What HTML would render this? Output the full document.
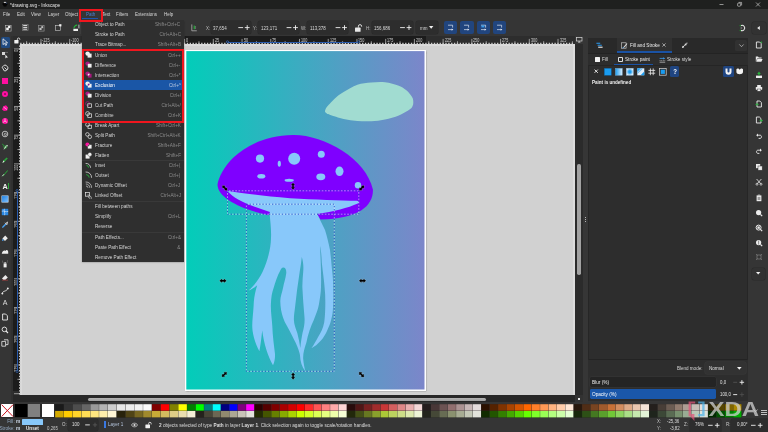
<!DOCTYPE html>
<html lang="en"><head><meta charset="utf-8"><title>*drawing.svg - Inkscape</title>
<style>
html,body{margin:0;padding:0;}
body{width:768px;height:432px;overflow:hidden;background:#353535;position:relative;font-family:"Liberation Sans",sans-serif;}
.r{position:absolute;}
.t{position:absolute;white-space:nowrap;letter-spacing:0;}
svg{position:absolute;overflow:visible;}
#w{position:absolute;left:0;top:0;width:768px;height:432px;overflow:hidden;will-change:transform;}
</style></head><body><div id="w">

<div class="r" style="left:0px;top:0px;width:768px;height:8.7px;background:#1f201f;"></div>
<div class="r" style="left:0px;top:8.7px;width:768px;height:11.3px;background:#363636;"></div>
<svg style="left:1.6px;top:1.2px" width="6" height="6" viewBox="0 0 6 6"><path d="M3 0.2L5.6 2.8Q5.9 3.4 5.2 3.8L4.4 4.2L5 5L3 5.8L1 5L1.6 4.2L0.8 3.8Q0.1 3.4 0.4 2.8Z" fill="#050505"/><path d="M3 0.4L4.6 2L3.6 1.7L3 2.3L2.3 1.7L1.3 2.1Z" fill="#f4f4f4"/><path d="M3.6 0.9L5.3 2.7L4.4 2.5Z" fill="#4a78c8"/></svg>
<span class="t" style="left:9.8px;transform-origin:0 50%;top:1.70px;font-size:5.0px;line-height:6.00px;color:#e6e6e6;font-weight:normal;transform:scaleX(0.945);">*drawing.svg - Inkscape</span>
<svg style="left:712px;top:0" width="56" height="9" viewBox="0 0 56 9"><path d="M7.5 4.5h4" stroke="#e0e0e0" stroke-width="0.6" fill="none"/><rect x="25.6" y="3.2" width="3" height="3" rx="0.6" stroke="#e0e0e0" stroke-width="0.6" fill="none"/><path d="M26.6 2.4h3v3" stroke="#e0e0e0" stroke-width="0.6" fill="none"/><path d="M44 2.5l4 4M48 2.5l-4 4" stroke="#e0e0e0" stroke-width="0.6" fill="none"/></svg>
<span class="t" style="left:3.1px;transform-origin:0 50%;top:11.10px;font-size:5.0px;line-height:6.00px;color:#d8d8d8;font-weight:normal;transform:scaleX(0.9);">File</span>
<span class="t" style="left:17.1px;transform-origin:0 50%;top:11.10px;font-size:5.0px;line-height:6.00px;color:#d8d8d8;font-weight:normal;transform:scaleX(0.9);">Edit</span>
<span class="t" style="left:31.2px;transform-origin:0 50%;top:11.10px;font-size:5.0px;line-height:6.00px;color:#d8d8d8;font-weight:normal;transform:scaleX(0.9);">View</span>
<span class="t" style="left:47.7px;transform-origin:0 50%;top:11.10px;font-size:5.0px;line-height:6.00px;color:#d8d8d8;font-weight:normal;transform:scaleX(0.9);">Layer</span>
<span class="t" style="left:65.2px;transform-origin:0 50%;top:11.10px;font-size:5.0px;line-height:6.00px;color:#d8d8d8;font-weight:normal;transform:scaleX(0.9);">Object</span>
<span class="t" style="left:85.6px;transform-origin:0 50%;top:11.10px;font-size:5.0px;line-height:6.00px;color:#4a80d4;font-weight:normal;transform:scaleX(0.9);">Path</span>
<span class="t" style="left:101.6px;transform-origin:0 50%;top:11.10px;font-size:5.0px;line-height:6.00px;color:#d8d8d8;font-weight:normal;transform:scaleX(0.9);">Text</span>
<span class="t" style="left:116.2px;transform-origin:0 50%;top:11.10px;font-size:5.0px;line-height:6.00px;color:#d8d8d8;font-weight:normal;transform:scaleX(0.9);">Filters</span>
<span class="t" style="left:135px;transform-origin:0 50%;top:11.10px;font-size:5.0px;line-height:6.00px;color:#d8d8d8;font-weight:normal;transform:scaleX(0.9);">Extensions</span>
<span class="t" style="left:163.9px;transform-origin:0 50%;top:11.10px;font-size:5.0px;line-height:6.00px;color:#d8d8d8;font-weight:normal;transform:scaleX(0.9);">Help</span>
<div class="r" style="left:82.3px;top:18.0px;width:15.8px;height:1.0px;background:#1d55b0;"></div>
<div class="r" style="left:210.7px;top:21.2px;width:40px;height:12.6px;background:#2d2d2d;border-radius:2px;box-shadow:0 0 0 0.5px #292929;"></div>
<span class="t" style="left:213.29999999999998px;transform-origin:0 50%;top:24.78px;font-size:5.2px;line-height:6.24px;color:#d8d8d8;font-weight:normal;transform:scaleX(0.86);">37,654</span>
<span class="t" style="left:205.5px;transform-origin:0 50%;top:24.90px;font-size:5.0px;line-height:6.00px;color:#bdbdbd;font-weight:normal;transform:scaleX(0.88);">X:</span>
<svg style="left:0;top:0" width="768" height="40"><path d="M238.29999999999998 27.6h4.8 M244.79999999999998 27.6h4.8 M247.2 25.2v4.8" stroke="#f0f0f0" stroke-width="0.9" fill="none"/></svg>
<div class="r" style="left:258px;top:21.2px;width:41px;height:12.6px;background:#2d2d2d;border-radius:2px;box-shadow:0 0 0 0.5px #292929;"></div>
<span class="t" style="left:260.6px;transform-origin:0 50%;top:24.78px;font-size:5.2px;line-height:6.24px;color:#d8d8d8;font-weight:normal;transform:scaleX(0.86);">123,171</span>
<span class="t" style="left:253px;transform-origin:0 50%;top:24.90px;font-size:5.0px;line-height:6.00px;color:#bdbdbd;font-weight:normal;transform:scaleX(0.88);">Y:</span>
<svg style="left:0;top:0" width="768" height="40"><path d="M286.6 27.6h4.8 M293.1 27.6h4.8 M295.5 25.2v4.8" stroke="#f0f0f0" stroke-width="0.9" fill="none"/></svg>
<div class="r" style="left:307px;top:21.2px;width:41px;height:12.6px;background:#2d2d2d;border-radius:2px;box-shadow:0 0 0 0.5px #292929;"></div>
<span class="t" style="left:309.6px;transform-origin:0 50%;top:24.78px;font-size:5.2px;line-height:6.24px;color:#d8d8d8;font-weight:normal;transform:scaleX(0.86);">113,378</span>
<span class="t" style="left:300.5px;transform-origin:0 50%;top:24.90px;font-size:5.0px;line-height:6.00px;color:#bdbdbd;font-weight:normal;transform:scaleX(0.88);">W:</span>
<svg style="left:0;top:0" width="768" height="40"><path d="M335.6 27.6h4.8 M342.1 27.6h4.8 M344.5 25.2v4.8" stroke="#f0f0f0" stroke-width="0.9" fill="none"/></svg>
<div class="r" style="left:371.5px;top:21.2px;width:41px;height:12.6px;background:#2d2d2d;border-radius:2px;box-shadow:0 0 0 0.5px #292929;"></div>
<span class="t" style="left:374.1px;transform-origin:0 50%;top:24.78px;font-size:5.2px;line-height:6.24px;color:#d8d8d8;font-weight:normal;transform:scaleX(0.86);">156,686</span>
<span class="t" style="left:365.8px;transform-origin:0 50%;top:24.90px;font-size:5.0px;line-height:6.00px;color:#bdbdbd;font-weight:normal;transform:scaleX(0.88);">H:</span>
<svg style="left:0;top:0" width="768" height="40"><path d="M400.1 27.6h4.8 M406.6 27.6h4.8 M409.0 25.2v4.8" stroke="#f0f0f0" stroke-width="0.9" fill="none"/></svg>
<svg style="left:353.5px;top:22.5px" width="9" height="10" viewBox="0 0 9 10"><rect x="1" y="4.6" width="5.6" height="4.2" rx="0.6" fill="#e8e8e8"/><path d="M4.4 4.6V3.2a1.6 1.6 0 0 1 3.2 0V3.8" stroke="#e8e8e8" stroke-width="0.9" fill="none"/></svg>
<div class="r" style="left:415.5px;top:21.2px;width:22.8px;height:12.6px;background:#2d2d2d;border-radius:2px;box-shadow:0 0 0 0.5px #292929;"></div>
<span class="t" style="left:419.6px;transform-origin:0 50%;top:24.90px;font-size:5.0px;line-height:6.00px;color:#d8d8d8;font-weight:normal;transform:scaleX(0.9);">mm</span>
<svg style="left:429.3px;top:26.4px" width="4.4" height="3" viewBox="0 0 4.4 3"><path d="M0 0h4.4L2.2 2.8z" fill="#f0f0f0"/></svg>
<div class="r" style="left:443.8px;top:21.2px;width:13.4px;height:12.6px;background:#21457e;border-radius:2px;"></div>
<svg style="left:447.0px;top:23.6px" width="7" height="8" viewBox="0 0 7 8"><path d="M1 1.2h4.6M5.6 1.2v2.4M1 5.6h4.2" stroke="#dfe6f2" stroke-width="0.7" fill="none"/><path d="M4.6 4.4l1.8 1.2-1.8 1.2z" fill="#dfe6f2"/></svg>
<div class="r" style="left:460.2px;top:21.2px;width:13.4px;height:12.6px;background:#21457e;border-radius:2px;"></div>
<svg style="left:463.4px;top:23.6px" width="7" height="8" viewBox="0 0 7 8"><path d="M1 1.2h4.6M5.6 1.2v2.4M1 5.6h4.2" stroke="#dfe6f2" stroke-width="0.7" fill="none"/><path d="M4.6 4.4l1.8 1.2-1.8 1.2z" fill="#dfe6f2"/></svg>
<div class="r" style="left:476.6px;top:21.2px;width:13.4px;height:12.6px;background:#21457e;border-radius:2px;"></div>
<svg style="left:479.8px;top:23.6px" width="7" height="8" viewBox="0 0 7 8"><path d="M1 1.2h4.6M5.6 1.2v2.4M1 5.6h4.2" stroke="#dfe6f2" stroke-width="0.7" fill="none"/><path d="M4.6 4.4l1.8 1.2-1.8 1.2z" fill="#dfe6f2"/><rect x="1.4" y="1.4" width="3" height="2" fill="#3a9be8"/></svg>
<div class="r" style="left:493px;top:21.2px;width:13.4px;height:12.6px;background:#21457e;border-radius:2px;"></div>
<svg style="left:496.2px;top:23.6px" width="7" height="8" viewBox="0 0 7 8"><path d="M1 1.2h4.6M5.6 1.2v2.4M1 5.6h4.2" stroke="#dfe6f2" stroke-width="0.7" fill="none"/><path d="M4.6 4.4l1.8 1.2-1.8 1.2z" fill="#dfe6f2"/></svg>
<svg style="left:5.3px;top:24.6px" width="6.4" height="6.4" viewBox="0 0 6.4 6.4"><rect x="0.3" y="0.3" width="5.8" height="5.8" fill="none" stroke="#bdbdbd" stroke-width="0.6"/><rect x="1.2" y="2.6" width="2.6" height="2.6" fill="#f2f2f2"/><circle cx="4.2" cy="2" r="1.3" fill="#f2f2f2"/></svg>
<svg style="left:21.5px;top:24.4px" width="6.4" height="6.8" viewBox="0 0 6.4 6.8"><rect x="0.3" y="0.3" width="5.8" height="6.2" fill="none" stroke="#9a9a9a" stroke-width="0.5"/><path d="M1.2 1.6h4M1.2 3.4h4M1.2 5.2h4" stroke="#e6e6e6" stroke-width="1"/></svg>
<svg style="left:38.4px;top:24.6px" width="6.4" height="6.4" viewBox="0 0 6.4 6.4"><rect x="0.3" y="0.3" width="5.8" height="5.8" fill="#3c3c3c" stroke="#9a9a9a" stroke-width="0.6"/><rect x="1.4" y="2.8" width="2.2" height="2.2" fill="#bdbdbd"/><circle cx="4.2" cy="2.2" r="1.1" fill="#bdbdbd"/></svg>
<svg style="left:54.8px;top:24px" width="7" height="7" viewBox="0 0 7 7"><rect x="0.5" y="1.6" width="4.8" height="4.8" fill="none" stroke="#c8c8c8" stroke-width="0.6"/><rect x="4.2" y="0.2" width="2.2" height="2.2" fill="#f4f4f4"/></svg>
<svg style="left:72.8px;top:23.6px" width="8" height="8" viewBox="0 0 8 8"><path d="M1 4.4A3 3 0 0 1 4.2 1.2" stroke="#27b33b" stroke-width="1.2" fill="none"/><rect x="0.4" y="4.8" width="4.6" height="2.2" fill="#f2f2f2"/><rect x="5.4" y="0.6" width="1" height="3.8" fill="#bdbdbd"/></svg>
<div class="r" style="left:79.6px;top:22px;width:0.5px;height:12px;background:#3d3d3d;"></div>
<svg style="left:191.2px;top:23.6px" width="6.4" height="8" viewBox="0 0 6.4 8"><path d="M0.8 0.4V6.8H5.8" stroke="#b0b0b0" stroke-width="0.8" fill="none"/><rect x="2.6" y="1.6" width="1.5" height="3.6" fill="#2a9a3a"/><path d="M4.6 2V5" stroke="#8a8a8a" stroke-width="0.6"/></svg>
<svg style="left:737.6px;top:23.6px" width="8" height="8" viewBox="0 0 8 8"><path d="M2.6 1.7A2.7 2.7 0 1 1 2.6 6.3" fill="none" stroke="#e8e8e8" stroke-width="1.1"/><rect x="1.6" y="0.9" width="1.3" height="1.3" fill="#1f8a2c"/><rect x="1.6" y="5.8" width="1.3" height="1.3" fill="#1f8a2c"/><circle cx="3.4" cy="4" r="1" fill="#6a6a6a"/></svg>
<div class="r" style="left:752px;top:21.7px;width:14.2px;height:12.4px;background:#323232;border-radius:2px;box-shadow:0 0 0 0.5px #2a2a2a;"></div>
<svg style="left:757px;top:26px" width="3" height="4" viewBox="0 0 3 4"><path d="M2.8 0v4L0.2 2z" fill="#f0f0f0"/></svg>
<div class="r" style="left:20.0px;top:43.8px;width:554.8px;height:350.8px;background:#d1d1d1;"></div>
<div class="r" style="left:20.0px;top:43.8px;width:554.8px;height:2.4px;background:#dbdbdb;"></div>
<div class="r" style="left:20.0px;top:43.8px;width:1.5px;height:350.8px;background:#dadada;"></div>
<div class="r" style="left:572.6999999999999px;top:43.8px;width:2.1px;height:350.8px;background:#dcdcdc;"></div>
<div class="r" style="left:13.2px;top:394.6px;width:561.5999999999999px;height:1.0px;background:#1c1c1c;"></div>
<div class="r" style="left:12.6px;top:36.1px;width:562.1999999999999px;height:7.8px;background:#2d2d2d;"></div>
<div class="r" style="left:184.6px;top:36.1px;width:241.4px;height:7.8px;background:#1c1c1c;"></div>
<div class="r" style="left:12.6px;top:43.8px;width:7.4px;height:350.8px;background:#2d2d2d;"></div>
<div class="r" style="left:12.6px;top:48.7px;width:7.4px;height:342.6px;background:#1c1c1c;"></div>
<svg style="left:0;top:0" width="768" height="50"><path d="M20.87 42.8V44.3M23.74 42.8V44.3M26.61 42.8V44.3M29.48 42.8V44.3M32.36 42.8V44.3M35.23 42.8V44.3M38.10 42.8V44.3M40.97 42.8V44.3M43.85 42.8V44.3M46.72 42.8V44.3M49.59 42.8V44.3M52.47 42.8V44.3M55.34 42.8V44.3M58.21 42.8V44.3M61.08 42.8V44.3M63.95 42.8V44.3M66.83 42.8V44.3M69.70 42.8V44.3M72.57 42.8V44.3M75.44 42.8V44.3M78.32 42.8V44.3M81.19 42.8V44.3M84.06 42.8V44.3M86.93 42.8V44.3M89.81 42.8V44.3M92.68 42.8V44.3M95.55 42.8V44.3M98.42 42.8V44.3M101.30 42.8V44.3M104.17 42.8V44.3M107.04 42.8V44.3M109.91 42.8V44.3M112.79 42.8V44.3M115.66 42.8V44.3M118.53 42.8V44.3M121.41 42.8V44.3M124.28 42.8V44.3M127.15 42.8V44.3M130.02 42.8V44.3M132.89 42.8V44.3M135.77 42.8V44.3M138.64 42.8V44.3M141.51 42.8V44.3M144.38 42.8V44.3M147.26 42.8V44.3M150.13 42.8V44.3M153.00 42.8V44.3M155.88 42.8V44.3M158.75 42.8V44.3M161.62 42.8V44.3M164.49 42.8V44.3M167.37 42.8V44.3M170.24 42.8V44.3M173.11 42.8V44.3M175.98 42.8V44.3M178.85 42.8V44.3M181.73 42.8V44.3M184.60 42.8V44.3M187.47 42.8V44.3M190.34 42.8V44.3M193.22 42.8V44.3M196.09 42.8V44.3M198.96 42.8V44.3M201.83 42.8V44.3M204.71 42.8V44.3M207.58 42.8V44.3M210.45 42.8V44.3M213.32 42.8V44.3M216.20 42.8V44.3M219.07 42.8V44.3M221.94 42.8V44.3M224.81 42.8V44.3M227.69 42.8V44.3M230.56 42.8V44.3M233.43 42.8V44.3M236.31 42.8V44.3M239.18 42.8V44.3M242.05 42.8V44.3M244.92 42.8V44.3M247.79 42.8V44.3M250.67 42.8V44.3M253.54 42.8V44.3M256.41 42.8V44.3M259.28 42.8V44.3M262.16 42.8V44.3M265.03 42.8V44.3M267.90 42.8V44.3M270.77 42.8V44.3M273.65 42.8V44.3M276.52 42.8V44.3M279.39 42.8V44.3M282.26 42.8V44.3M285.14 42.8V44.3M288.01 42.8V44.3M290.88 42.8V44.3M293.75 42.8V44.3M296.63 42.8V44.3M299.50 42.8V44.3M302.37 42.8V44.3M305.25 42.8V44.3M308.12 42.8V44.3M310.99 42.8V44.3M313.86 42.8V44.3M316.74 42.8V44.3M319.61 42.8V44.3M322.48 42.8V44.3M325.35 42.8V44.3M328.23 42.8V44.3M331.10 42.8V44.3M333.97 42.8V44.3M336.84 42.8V44.3M339.72 42.8V44.3M342.59 42.8V44.3M345.46 42.8V44.3M348.33 42.8V44.3M351.20 42.8V44.3M354.08 42.8V44.3M356.95 42.8V44.3M359.82 42.8V44.3M362.69 42.8V44.3M365.57 42.8V44.3M368.44 42.8V44.3M371.31 42.8V44.3M374.19 42.8V44.3M377.06 42.8V44.3M379.93 42.8V44.3M382.80 42.8V44.3M385.68 42.8V44.3M388.55 42.8V44.3M391.42 42.8V44.3M394.29 42.8V44.3M397.16 42.8V44.3M400.04 42.8V44.3M402.91 42.8V44.3M405.78 42.8V44.3M408.65 42.8V44.3M411.53 42.8V44.3M414.40 42.8V44.3M417.27 42.8V44.3M420.14 42.8V44.3M423.02 42.8V44.3M425.89 42.8V44.3M428.76 42.8V44.3M431.63 42.8V44.3M434.51 42.8V44.3M437.38 42.8V44.3M440.25 42.8V44.3M443.12 42.8V44.3M446.00 42.8V44.3M448.87 42.8V44.3M451.74 42.8V44.3M454.62 42.8V44.3M457.49 42.8V44.3M460.36 42.8V44.3M463.23 42.8V44.3M466.11 42.8V44.3M468.98 42.8V44.3M471.85 42.8V44.3M474.72 42.8V44.3M477.60 42.8V44.3M480.47 42.8V44.3M483.34 42.8V44.3M486.21 42.8V44.3M489.09 42.8V44.3M491.96 42.8V44.3M494.83 42.8V44.3M497.70 42.8V44.3M500.58 42.8V44.3M503.45 42.8V44.3M506.32 42.8V44.3M509.19 42.8V44.3M512.07 42.8V44.3M514.94 42.8V44.3M517.81 42.8V44.3M520.68 42.8V44.3M523.55 42.8V44.3M526.43 42.8V44.3M529.30 42.8V44.3M532.17 42.8V44.3M535.04 42.8V44.3M537.92 42.8V44.3M540.79 42.8V44.3M543.66 42.8V44.3M546.53 42.8V44.3M549.41 42.8V44.3M552.28 42.8V44.3M555.15 42.8V44.3M558.02 42.8V44.3M560.90 42.8V44.3M563.77 42.8V44.3M566.64 42.8V44.3M569.51 42.8V44.3M572.39 42.8V44.3" stroke="#cdcdcd" stroke-width="1.35" fill="none"/><path d="M26.61 41.2V44.3M55.34 41.2V44.3M84.06 41.2V44.3M112.79 41.2V44.3M141.51 41.2V44.3M170.24 41.2V44.3M198.96 41.2V44.3M227.69 41.2V44.3M256.41 41.2V44.3M285.14 41.2V44.3M313.86 41.2V44.3M342.59 41.2V44.3M371.31 41.2V44.3M400.04 41.2V44.3M428.76 41.2V44.3M457.49 41.2V44.3M486.21 41.2V44.3M514.94 41.2V44.3M543.66 41.2V44.3M572.39 41.2V44.3" stroke="#c4c4c4" stroke-width="0.7" fill="none"/><path d="M40.97 38.9V44.3M69.70 38.9V44.3M98.42 38.9V44.3M127.15 38.9V44.3M155.88 38.9V44.3M184.60 38.9V44.3M213.32 38.9V44.3M242.05 38.9V44.3M270.77 38.9V44.3M299.50 38.9V44.3M328.23 38.9V44.3M356.95 38.9V44.3M385.68 38.9V44.3M414.40 38.9V44.3M443.12 38.9V44.3M471.85 38.9V44.3M500.58 38.9V44.3M529.30 38.9V44.3M558.02 38.9V44.3" stroke="#c8c8c8" stroke-width="0.7" fill="none"/></svg>
<span class="t" style="left:42.474999999999994px;transform-origin:0 50%;top:38.35px;font-size:4.75px;line-height:5.70px;color:#cfcfcf;font-weight:normal;transform:scaleX(0.79);">-125</span>
<span class="t" style="left:71.19999999999999px;transform-origin:0 50%;top:38.35px;font-size:4.75px;line-height:5.70px;color:#cfcfcf;font-weight:normal;transform:scaleX(0.79);">-100</span>
<span class="t" style="left:99.925px;transform-origin:0 50%;top:38.35px;font-size:4.75px;line-height:5.70px;color:#cfcfcf;font-weight:normal;transform:scaleX(0.79);">-75</span>
<span class="t" style="left:128.64999999999998px;transform-origin:0 50%;top:38.35px;font-size:4.75px;line-height:5.70px;color:#cfcfcf;font-weight:normal;transform:scaleX(0.79);">-50</span>
<span class="t" style="left:157.375px;transform-origin:0 50%;top:38.35px;font-size:4.75px;line-height:5.70px;color:#cfcfcf;font-weight:normal;transform:scaleX(0.79);">-25</span>
<span class="t" style="left:186.1px;transform-origin:0 50%;top:38.35px;font-size:4.75px;line-height:5.70px;color:#cfcfcf;font-weight:normal;transform:scaleX(0.79);">0</span>
<span class="t" style="left:214.825px;transform-origin:0 50%;top:38.35px;font-size:4.75px;line-height:5.70px;color:#cfcfcf;font-weight:normal;transform:scaleX(0.79);">25</span>
<span class="t" style="left:243.55px;transform-origin:0 50%;top:38.35px;font-size:4.75px;line-height:5.70px;color:#cfcfcf;font-weight:normal;transform:scaleX(0.79);">50</span>
<span class="t" style="left:272.275px;transform-origin:0 50%;top:38.35px;font-size:4.75px;line-height:5.70px;color:#cfcfcf;font-weight:normal;transform:scaleX(0.79);">75</span>
<span class="t" style="left:301.0px;transform-origin:0 50%;top:38.35px;font-size:4.75px;line-height:5.70px;color:#cfcfcf;font-weight:normal;transform:scaleX(0.79);">100</span>
<span class="t" style="left:329.725px;transform-origin:0 50%;top:38.35px;font-size:4.75px;line-height:5.70px;color:#cfcfcf;font-weight:normal;transform:scaleX(0.79);">125</span>
<span class="t" style="left:358.45px;transform-origin:0 50%;top:38.35px;font-size:4.75px;line-height:5.70px;color:#cfcfcf;font-weight:normal;transform:scaleX(0.79);">150</span>
<span class="t" style="left:387.175px;transform-origin:0 50%;top:38.35px;font-size:4.75px;line-height:5.70px;color:#cfcfcf;font-weight:normal;transform:scaleX(0.79);">175</span>
<span class="t" style="left:415.9px;transform-origin:0 50%;top:38.35px;font-size:4.75px;line-height:5.70px;color:#cfcfcf;font-weight:normal;transform:scaleX(0.79);">200</span>
<span class="t" style="left:444.625px;transform-origin:0 50%;top:38.35px;font-size:4.75px;line-height:5.70px;color:#cfcfcf;font-weight:normal;transform:scaleX(0.79);">225</span>
<span class="t" style="left:473.35px;transform-origin:0 50%;top:38.35px;font-size:4.75px;line-height:5.70px;color:#cfcfcf;font-weight:normal;transform:scaleX(0.79);">250</span>
<span class="t" style="left:502.07500000000005px;transform-origin:0 50%;top:38.35px;font-size:4.75px;line-height:5.70px;color:#cfcfcf;font-weight:normal;transform:scaleX(0.79);">275</span>
<span class="t" style="left:530.8px;transform-origin:0 50%;top:38.35px;font-size:4.75px;line-height:5.70px;color:#cfcfcf;font-weight:normal;transform:scaleX(0.79);">300</span>
<span class="t" style="left:559.525px;transform-origin:0 50%;top:38.35px;font-size:4.75px;line-height:5.70px;color:#cfcfcf;font-weight:normal;transform:scaleX(0.79);">325</span>
<svg style="left:0;top:0" width="30" height="400"><path d="M19 46.13H20.4M19 49.00H20.4M19 51.87H20.4M19 54.74H20.4M19 57.62H20.4M19 60.49H20.4M19 63.36H20.4M19 66.23H20.4M19 69.11H20.4M19 71.98H20.4M19 74.85H20.4M19 77.72H20.4M19 80.60H20.4M19 83.47H20.4M19 86.34H20.4M19 89.22H20.4M19 92.09H20.4M19 94.96H20.4M19 97.83H20.4M19 100.70H20.4M19 103.58H20.4M19 106.45H20.4M19 109.32H20.4M19 112.19H20.4M19 115.07H20.4M19 117.94H20.4M19 120.81H20.4M19 123.69H20.4M19 126.56H20.4M19 129.43H20.4M19 132.30H20.4M19 135.18H20.4M19 138.05H20.4M19 140.92H20.4M19 143.79H20.4M19 146.67H20.4M19 149.54H20.4M19 152.41H20.4M19 155.28H20.4M19 158.16H20.4M19 161.03H20.4M19 163.90H20.4M19 166.77H20.4M19 169.64H20.4M19 172.52H20.4M19 175.39H20.4M19 178.26H20.4M19 181.13H20.4M19 184.01H20.4M19 186.88H20.4M19 189.75H20.4M19 192.62H20.4M19 195.50H20.4M19 198.37H20.4M19 201.24H20.4M19 204.12H20.4M19 206.99H20.4M19 209.86H20.4M19 212.73H20.4M19 215.60H20.4M19 218.48H20.4M19 221.35H20.4M19 224.22H20.4M19 227.09H20.4M19 229.97H20.4M19 232.84H20.4M19 235.71H20.4M19 238.59H20.4M19 241.46H20.4M19 244.33H20.4M19 247.20H20.4M19 250.08H20.4M19 252.95H20.4M19 255.82H20.4M19 258.69H20.4M19 261.56H20.4M19 264.44H20.4M19 267.31H20.4M19 270.18H20.4M19 273.06H20.4M19 275.93H20.4M19 278.80H20.4M19 281.67H20.4M19 284.55H20.4M19 287.42H20.4M19 290.29H20.4M19 293.16H20.4M19 296.03H20.4M19 298.91H20.4M19 301.78H20.4M19 304.65H20.4M19 307.52H20.4M19 310.40H20.4M19 313.27H20.4M19 316.14H20.4M19 319.01H20.4M19 321.89H20.4M19 324.76H20.4M19 327.63H20.4M19 330.50H20.4M19 333.38H20.4M19 336.25H20.4M19 339.12H20.4M19 342.00H20.4M19 344.87H20.4M19 347.74H20.4M19 350.61H20.4M19 353.49H20.4M19 356.36H20.4M19 359.23H20.4M19 362.10H20.4M19 364.98H20.4M19 367.85H20.4M19 370.72H20.4M19 373.59H20.4M19 376.47H20.4M19 379.34H20.4M19 382.21H20.4M19 385.08H20.4M19 387.95H20.4M19 390.83H20.4M19 393.70H20.4" stroke="#cdcdcd" stroke-width="1.35" fill="none"/><path d="M17.4 63.36H20.4M17.4 92.09H20.4M17.4 120.81H20.4M17.4 149.54H20.4M17.4 178.26H20.4M17.4 206.99H20.4M17.4 235.71H20.4M17.4 264.44H20.4M17.4 293.16H20.4M17.4 321.89H20.4M17.4 350.61H20.4M17.4 379.34H20.4" stroke="#c4c4c4" stroke-width="0.7" fill="none"/><path d="M14 49.00H20.4M14 77.72H20.4M14 106.45H20.4M14 135.18H20.4M14 163.90H20.4M14 192.62H20.4M14 221.35H20.4M14 250.08H20.4M14 278.80H20.4M14 307.52H20.4M14 336.25H20.4M14 364.98H20.4M14 393.70H20.4" stroke="#c8c8c8" stroke-width="0.7" fill="none"/></svg>
<span class="t" style="left:7.199999999999999px;top:47.80px;width:20px;text-align:center;font-size:4.7px;line-height:5.6px;color:#cfcfcf;transform:rotate(-90deg) scaleX(0.76);transform-origin:50% 50%;">0</span>
<span class="t" style="left:7.199999999999999px;top:77.52px;width:20px;text-align:center;font-size:4.7px;line-height:5.6px;color:#cfcfcf;transform:rotate(-90deg) scaleX(0.76);transform-origin:50% 50%;">25</span>
<span class="t" style="left:7.199999999999999px;top:106.25px;width:20px;text-align:center;font-size:4.7px;line-height:5.6px;color:#cfcfcf;transform:rotate(-90deg) scaleX(0.76);transform-origin:50% 50%;">50</span>
<span class="t" style="left:7.199999999999999px;top:134.97px;width:20px;text-align:center;font-size:4.7px;line-height:5.6px;color:#cfcfcf;transform:rotate(-90deg) scaleX(0.76);transform-origin:50% 50%;">75</span>
<span class="t" style="left:7.199999999999999px;top:164.70px;width:20px;text-align:center;font-size:4.7px;line-height:5.6px;color:#cfcfcf;transform:rotate(-90deg) scaleX(0.76);transform-origin:50% 50%;">100</span>
<span class="t" style="left:7.199999999999999px;top:193.42px;width:20px;text-align:center;font-size:4.7px;line-height:5.6px;color:#cfcfcf;transform:rotate(-90deg) scaleX(0.76);transform-origin:50% 50%;">125</span>
<span class="t" style="left:7.199999999999999px;top:222.15px;width:20px;text-align:center;font-size:4.7px;line-height:5.6px;color:#cfcfcf;transform:rotate(-90deg) scaleX(0.76);transform-origin:50% 50%;">150</span>
<span class="t" style="left:7.199999999999999px;top:250.88px;width:20px;text-align:center;font-size:4.7px;line-height:5.6px;color:#cfcfcf;transform:rotate(-90deg) scaleX(0.76);transform-origin:50% 50%;">175</span>
<span class="t" style="left:7.199999999999999px;top:279.60px;width:20px;text-align:center;font-size:4.7px;line-height:5.6px;color:#cfcfcf;transform:rotate(-90deg) scaleX(0.76);transform-origin:50% 50%;">200</span>
<span class="t" style="left:7.199999999999999px;top:308.32px;width:20px;text-align:center;font-size:4.7px;line-height:5.6px;color:#cfcfcf;transform:rotate(-90deg) scaleX(0.76);transform-origin:50% 50%;">225</span>
<span class="t" style="left:7.199999999999999px;top:337.05px;width:20px;text-align:center;font-size:4.7px;line-height:5.6px;color:#cfcfcf;transform:rotate(-90deg) scaleX(0.76);transform-origin:50% 50%;">250</span>
<span class="t" style="left:7.199999999999999px;top:365.78px;width:20px;text-align:center;font-size:4.7px;line-height:5.6px;color:#cfcfcf;transform:rotate(-90deg) scaleX(0.76);transform-origin:50% 50%;">275</span>
<div class="r" style="left:227.5px;top:41.5px;width:131px;height:0.8px;background:#2a5cae;"></div>
<div class="r" style="left:16.7px;top:190.6px;width:0.8px;height:181px;background:#2a5cae;"></div>
<svg style="left:0;top:0" width="768" height="432"><g fill="#1b1b1b" stroke="#3a78d8" stroke-width="0.6"><circle cx="227.5" cy="41.9" r="1.1"/><circle cx="358.5" cy="41.9" r="1.1"/><circle cx="17.1" cy="190.6" r="1.1"/><circle cx="17.1" cy="371.4" r="1.1"/></g></svg>
<svg style="left:13.6px;top:36.6px" width="6.5" height="7" viewBox="0 0 6.5 7"><rect x="0.3" y="3" width="4.2" height="3.4" rx="0.4" fill="#f0f0f0"/><path d="M3.4 3V2.2a1.2 1.2 0 0 1 2.4 0v0.6" stroke="#f0f0f0" stroke-width="0.8" fill="none"/></svg>
<div class="r" style="left:184.7px;top:49.8px;width:241.3px;height:341.4px;background:#ffffff;box-shadow:0.8px 0.8px 1.4px rgba(0,0,0,0.5);"></div>
<svg style="left:0;top:0" width="768" height="432" viewBox="0 0 768 432">
<defs><linearGradient id="pg" x1="186" x2="424.6" y1="0" y2="0" gradientUnits="userSpaceOnUse"><stop offset="0" stop-color="#02cdb9"/><stop offset="1" stop-color="#7c86ca"/></linearGradient></defs>
<rect x="186.3" y="51.1" width="238.2" height="338.4" fill="url(#pg)"/>
<path d="M325.0 111.0 C325.1 110.0 325.8 108.4 326.6 107.2 C327.4 106.0 328.2 105.3 329.8 103.7 C331.4 102.1 333.7 99.5 336.0 97.5 C338.3 95.5 340.0 94.1 343.6 92.0 C347.2 89.9 352.8 86.4 357.4 84.8 C362.0 83.2 366.6 83.0 371.2 82.6 C375.8 82.2 380.4 81.8 385.0 82.3 C389.6 82.8 395.3 84.4 398.8 85.7 C402.3 87.0 404.1 88.6 406.0 90.0 C407.9 91.4 408.8 92.7 409.9 94.0 C411.0 95.3 412.0 96.6 412.6 98.0 C413.2 99.4 413.3 101.0 413.3 102.3 C413.3 103.6 413.2 104.8 412.6 106.0 C412.0 107.2 412.2 107.6 409.9 109.2 C407.6 110.8 402.9 113.7 398.8 115.4 C394.7 117.1 389.6 118.5 385.0 119.5 C380.4 120.5 375.8 121.0 371.2 121.2 C366.6 121.4 362.0 121.3 357.4 120.9 C352.8 120.5 348.2 119.9 343.6 118.9 C339.0 117.9 332.7 115.7 329.8 114.7 C326.9 113.7 327.0 113.6 326.2 113.0 C325.4 112.4 324.9 112.0 325.0 111.0 Z" fill="#a1dcd1"/>
<path d="M217.5 184.5 C218.5 178 224 166 234 157 C 246 146 266 135.2 293 135 C323.2 134.4 366.3 158.5 372.9 189.5 C373.6 205 360 219 320.5 219.6 L317 214 L269.4 214 L268.4 215.2 C242 209.5 217.5 198 217.5 184.5 Z" fill="#7f00ff"/>
<g fill="#88c8fa">
<circle cx="260" cy="158.6" r="4.1"/><ellipse cx="279.3" cy="163.8" rx="1.6" ry="3"/><circle cx="294.2" cy="158.8" r="6"/><circle cx="321.3" cy="154.2" r="3.5"/>
<ellipse cx="339.5" cy="171.3" rx="4" ry="4.8"/><ellipse cx="320.8" cy="176.8" rx="4.5" ry="3.4"/><ellipse cx="261.3" cy="176.2" rx="4" ry="2.3"/><ellipse cx="289.2" cy="180.3" rx="4.6" ry="1.5"/><circle cx="358" cy="185.2" r="3.2"/>
<path d="M227.6 191 C240 192.6 262 196 290 198.2 C315 199.8 340 200.2 356.6 200.8 C359.2 201 359.4 202.8 357.8 203.6 C348 208 334 211.6 317 214 L269.6 214 L269.9 212 C252 206.4 233.6 199.6 227.6 191 Z"/>
<path fill-rule="evenodd" d="M269.5 213 C270.4 222 271.4 230 271 238 C270.8 248 268 260 262.5 272 C259 279 254 286 248.6 290.6 C252 289 255 287 257.2 285.2 C255 292 253.8 299 253.6 306 C253 316 251.6 324 252.6 331 C253.6 338 256.4 346 259.4 351.2 C260.6 345 261.4 338 262.2 330.6 C264 344 268 357 273 365.2 C274.6 362 275.2 358 275 354 C274 345 272.6 336 272.3 326 C271.8 318 270.6 311 270.9 304 C271.2 297 272 292.6 273.6 288 C275.4 282 277.4 275.6 280.3 270.5 C281.2 268.6 282 267.6 283.2 267.6 C285.6 267.6 286.6 270.4 286.2 273.4 C285.6 278.6 283.8 283 283 288 C282.2 292.6 280.2 296.6 280.3 301.4 C280.4 307.4 281.4 312.6 283 317.5 C284 320.6 285.4 323.4 287 326 C288.8 329.2 290.4 332.4 292 335.6 C294.4 340.4 297.2 345.6 298.6 350 C299.4 352.4 299.8 354 300 355.4 C300.2 361 302 367 305.2 371 C304.6 368 303.6 364 303.2 359 C302.8 354 304.6 348 306.4 342.6 C308 334 311 326 313.8 320 C316 314 318 309.6 318.8 305 C320 298 321 292 321 287 C321.4 274 320.6 258 320 246 C321 250 321.6 256 321.8 262.6 C322.6 271 324 279 324.6 287.6 C325.2 293 325.4 299 325.3 305 C325.2 311 325 317 324.2 322.6 C323 328.6 320.8 333 318.1 337 C316 340.8 313.8 345 311.4 348.2 C314.6 346.8 317.8 344 320.7 340.8 C323.6 337.6 325.6 334 327.2 330.4 C329 326.6 330.4 323.2 331.1 320 C332 316.6 332.6 314 332.8 311 C333.2 305 333.4 299 333.3 294 L333.2 290 C333.2 284 333 279.6 332.6 275 C331.6 266 331 258 330 250 C328.6 243 327 236 325 230 C321.8 223.6 319.2 218 316.7 213 Z M301.8 257 C303.4 262 303.6 267 303.2 271.8 C302.8 277.4 302.2 282.6 302.4 288 C302.6 292.6 303 297 303.2 301.4 C303.6 307 304.2 312.4 304.5 317.5 C304.9 322.6 304 328 302.5 333 C301.6 337.6 300.9 342 300.3 348 C299.6 343 298.6 338 297.3 333 C295.8 329 294 324 293.9 320 C293.8 315.6 294.6 311.4 295.1 306.8 C295.8 301.4 296.4 296 297 290.6 C297.8 284.4 298.9 278 299.7 271.8 C300.5 267 301.3 262 301.8 257 Z"/>
</g>
</svg>
<svg style="left:0;top:0" width="768" height="432" viewBox="0 0 768 432">
<g fill="none" stroke-width="0.85">
<rect x="227.5" y="190.8" width="131.3" height="23.4" stroke="#ffffff" stroke-opacity="0.55" stroke-dasharray="1.9 1.3" stroke-dashoffset="-1.3"/>
<rect x="227.5" y="190.8" width="131.3" height="23.4" stroke="#2444c4" stroke-opacity="0.9" stroke-dasharray="1.3 1.9"/>
<rect x="246.4" y="204.2" width="87.9" height="167.1" stroke="#ffffff" stroke-opacity="0.55" stroke-dasharray="1.9 1.3" stroke-dashoffset="-1.3"/>
<rect x="246.4" y="204.2" width="87.9" height="167.1" stroke="#2444c4" stroke-opacity="0.9" stroke-dasharray="1.3 1.9"/>
</g><g transform="translate(224.8 188.0) rotate(45)"><path d="M-3.3 0L-1.2 -1.7V-0.7H1.2V-1.7L3.3 0L1.2 1.7V0.7H-1.2V1.7Z" fill="none" stroke="#fff" stroke-opacity="0.35" stroke-width="1.1" stroke-linejoin="round"/><path d="M-3.3 0L-1.2 -1.7V-0.7H1.2V-1.7L3.3 0L1.2 1.7V0.7H-1.2V1.7Z" fill="#000" stroke="#000" stroke-width="0.35" stroke-linejoin="round"/></g><g transform="translate(293 186.3) rotate(90)"><path d="M-3.3 0L-1.2 -1.7V-0.7H1.2V-1.7L3.3 0L1.2 1.7V0.7H-1.2V1.7Z" fill="none" stroke="#fff" stroke-opacity="0.35" stroke-width="1.1" stroke-linejoin="round"/><path d="M-3.3 0L-1.2 -1.7V-0.7H1.2V-1.7L3.3 0L1.2 1.7V0.7H-1.2V1.7Z" fill="#000" stroke="#000" stroke-width="0.35" stroke-linejoin="round"/></g><g transform="translate(361.7 188.0) rotate(-45)"><path d="M-3.3 0L-1.2 -1.7V-0.7H1.2V-1.7L3.3 0L1.2 1.7V0.7H-1.2V1.7Z" fill="none" stroke="#fff" stroke-opacity="0.35" stroke-width="1.1" stroke-linejoin="round"/><path d="M-3.3 0L-1.2 -1.7V-0.7H1.2V-1.7L3.3 0L1.2 1.7V0.7H-1.2V1.7Z" fill="#000" stroke="#000" stroke-width="0.35" stroke-linejoin="round"/></g><g transform="translate(223 280.8) rotate(0)"><path d="M-3.3 0L-1.2 -1.7V-0.7H1.2V-1.7L3.3 0L1.2 1.7V0.7H-1.2V1.7Z" fill="none" stroke="#fff" stroke-opacity="0.35" stroke-width="1.1" stroke-linejoin="round"/><path d="M-3.3 0L-1.2 -1.7V-0.7H1.2V-1.7L3.3 0L1.2 1.7V0.7H-1.2V1.7Z" fill="#000" stroke="#000" stroke-width="0.35" stroke-linejoin="round"/></g><g transform="translate(362.5 280.8) rotate(0)"><path d="M-3.3 0L-1.2 -1.7V-0.7H1.2V-1.7L3.3 0L1.2 1.7V0.7H-1.2V1.7Z" fill="none" stroke="#fff" stroke-opacity="0.35" stroke-width="1.1" stroke-linejoin="round"/><path d="M-3.3 0L-1.2 -1.7V-0.7H1.2V-1.7L3.3 0L1.2 1.7V0.7H-1.2V1.7Z" fill="#000" stroke="#000" stroke-width="0.35" stroke-linejoin="round"/></g><g transform="translate(224.3 374.5) rotate(-45)"><path d="M-3.3 0L-1.2 -1.7V-0.7H1.2V-1.7L3.3 0L1.2 1.7V0.7H-1.2V1.7Z" fill="none" stroke="#fff" stroke-opacity="0.35" stroke-width="1.1" stroke-linejoin="round"/><path d="M-3.3 0L-1.2 -1.7V-0.7H1.2V-1.7L3.3 0L1.2 1.7V0.7H-1.2V1.7Z" fill="#000" stroke="#000" stroke-width="0.35" stroke-linejoin="round"/></g><g transform="translate(293.1 376.1) rotate(90)"><path d="M-3.3 0L-1.2 -1.7V-0.7H1.2V-1.7L3.3 0L1.2 1.7V0.7H-1.2V1.7Z" fill="none" stroke="#fff" stroke-opacity="0.35" stroke-width="1.1" stroke-linejoin="round"/><path d="M-3.3 0L-1.2 -1.7V-0.7H1.2V-1.7L3.3 0L1.2 1.7V0.7H-1.2V1.7Z" fill="#000" stroke="#000" stroke-width="0.35" stroke-linejoin="round"/></g><g transform="translate(361.5 374.6) rotate(45)"><path d="M-3.3 0L-1.2 -1.7V-0.7H1.2V-1.7L3.3 0L1.2 1.7V0.7H-1.2V1.7Z" fill="none" stroke="#fff" stroke-opacity="0.35" stroke-width="1.1" stroke-linejoin="round"/><path d="M-3.3 0L-1.2 -1.7V-0.7H1.2V-1.7L3.3 0L1.2 1.7V0.7H-1.2V1.7Z" fill="#000" stroke="#000" stroke-width="0.35" stroke-linejoin="round"/></g></svg>
<div class="r" style="left:0px;top:36px;width:10.8px;height:366px;background:#353535;"></div>
<div class="r" style="left:10.8px;top:36px;width:0.5px;height:366px;background:#262626;"></div>
<div class="r" style="left:11.3px;top:36px;width:1.3px;height:366px;background:#303030;"></div>
<div class="r" style="left:0.8px;top:36.6px;width:9.6px;height:11.4px;background:#204a80;border-radius:1.5px;"></div>
<svg style="left:1.2000000000000002px;top:38.20px" width="8" height="8" viewBox="0 0 8 8"><path d="M2 0.8V6.6L3.6 5.2L4.6 7.4L5.6 7L4.6 4.8H6.6Z" fill="none" stroke="#f4f4f4" stroke-width="0.8" stroke-linejoin="round"/></svg>
<svg style="left:1.2000000000000002px;top:51.27px" width="8" height="8" viewBox="0 0 8 8"><path d="M4.4 3.6V7.4L5.6 6.4H7Z" fill="#f0f0f0"/><rect x="1" y="1" width="3" height="3" fill="#d8d8d8"/><path d="M4 1.4H7" stroke="#8a8a8a" stroke-width="0.6"/></svg>
<svg style="left:1.2000000000000002px;top:64.34px" width="8" height="8" viewBox="0 0 8 8"><path d="M1.2 3.2L3.2 1.2H5L6.8 3.2V5L5 6.8H3.2Z" fill="none" stroke="#ececec" stroke-width="0.9"/><path d="M3.4 3.4L5.8 5.8" stroke="#ececec" stroke-width="0.9"/></svg>
<svg style="left:1.2000000000000002px;top:77.41px" width="8" height="8" viewBox="0 0 8 8"><rect x="1" y="1" width="6" height="6" fill="#ff0fa0"/></svg>
<svg style="left:1.2000000000000002px;top:90.48px" width="8" height="8" viewBox="0 0 8 8"><circle cx="4" cy="4" r="3" fill="#ff0fa0"/><circle cx="4" cy="4" r="1" fill="#8a0a5a"/></svg>
<svg style="left:1.2000000000000002px;top:103.55px" width="8" height="8" viewBox="0 0 8 8"><path d="M1 5.4L2.4 2.2L5 1.2L7 3.6L6.2 6.4L3 7Z" fill="#ff0fa0"/><path d="M2.6 3L6 5.6" stroke="#f4d0e6" stroke-width="0.7"/></svg>
<svg style="left:1.2000000000000002px;top:116.62px" width="8" height="8" viewBox="0 0 8 8"><circle cx="4" cy="4" r="3" fill="#ff0fa0"/><path d="M4 4V1.4M4 4L1.8 5.6M4 4L6.2 5.6" stroke="#fbe0f0" stroke-width="0.7"/></svg>
<svg style="left:1.2000000000000002px;top:129.69px" width="8" height="8" viewBox="0 0 8 8"><circle cx="4" cy="4" r="2.8" fill="none" stroke="#c8c8c8" stroke-width="0.9"/><circle cx="4.3" cy="4.3" r="1.1" fill="none" stroke="#c8c8c8" stroke-width="0.8"/></svg>
<svg style="left:1.2000000000000002px;top:142.76px" width="8" height="8" viewBox="0 0 8 8"><path d="M1 1.4C2.4 0.8 3 2.4 2.2 3.4" stroke="#2aa63a" stroke-width="0.8" fill="none"/><path d="M2.6 6.8L3.2 4.6L6 1.8L7 2.8L4.2 5.6Z" fill="#d8d8d8"/><circle cx="4.4" cy="4" r="1.4" fill="none" stroke="#2aa63a" stroke-width="0.7"/></svg>
<svg style="left:1.2000000000000002px;top:155.83px" width="8" height="8" viewBox="0 0 8 8"><path d="M1.4 7L2.4 4.6L5.6 1.4L6.8 2.6L3.6 5.8Z" fill="#2aa63a"/><path d="M1.4 7L2.4 4.6L3.6 5.8Z" fill="#e8e8e8"/></svg>
<svg style="left:1.2000000000000002px;top:168.90px" width="8" height="8" viewBox="0 0 8 8"><path d="M1.2 7.2L6.4 1.2L7 1.8L2.2 7.2Z" fill="#2aa63a"/><path d="M1.2 7.2L3 5.2" stroke="#e8e8e8" stroke-width="0.8"/></svg>
<span class="t" style="left:-95.4px;width:200px;text-align:center;transform-origin:50% 50%;top:181.51px;font-size:7.6px;line-height:9.12px;color:#f2f2f2;font-weight:bold;transform:scaleX(0.95);">A</span>
<div class="r" style="left:7.6px;top:182.97000000000003px;width:0.7px;height:6.2px;background:#2aa63a;"></div>
<svg style="left:1.2000000000000002px;top:195.04px" width="8" height="8" viewBox="0 0 8 8"><defs><linearGradient id="tg" x1="0" x2="1" y1="0" y2="1"><stop offset="0" stop-color="#1d7fe0"/><stop offset="1" stop-color="#7fc0ff"/></linearGradient></defs><rect x="0.8" y="0.8" width="6.4" height="6.4" fill="url(#tg)" stroke="#d8e8f8" stroke-width="0.5"/></svg>
<svg style="left:1.2000000000000002px;top:208.11px" width="8" height="8" viewBox="0 0 8 8"><rect x="0.8" y="0.8" width="6.4" height="6.4" fill="#2a86e0"/><path d="M0.8 3.2C3 2.4 5 4.4 7.2 3.4M3.4 0.8C2.6 3 4.4 5 3.6 7.2" stroke="#e8f0fa" stroke-width="0.6" fill="none"/></svg>
<svg style="left:1.2000000000000002px;top:221.18px" width="8" height="8" viewBox="0 0 8 8"><path d="M1 7L1.4 5.6L4.4 2.6L5.4 3.6L2.4 6.6Z" fill="#4aa0f0"/><path d="M4.2 1.8L6.2 3.8M4.8 2.6L6.4 1L7 1.6L5.4 3.2" stroke="#f0f0f0" stroke-width="0.9" fill="none"/></svg>
<svg style="left:1.2000000000000002px;top:234.25px" width="8" height="8" viewBox="0 0 8 8"><path d="M1.4 4.4L4.2 1.6L6.8 4.2L4 7Z" fill="#ececec"/><path d="M1 6C1 7.4 2.6 7.4 2.6 6L1.8 4.8Z" fill="#4aa0f0"/></svg>
<svg style="left:1.2000000000000002px;top:247.32px" width="8" height="8" viewBox="0 0 8 8"><path d="M0.8 6.4C1.6 3.6 3.4 3 4.4 4C5.4 2.4 6.8 3 7.2 4.8V6.8H0.8Z" fill="#ececec"/></svg>
<svg style="left:1.2000000000000002px;top:260.39px" width="8" height="8" viewBox="0 0 8 8"><rect x="2.6" y="3.4" width="3" height="4" fill="#ececec"/><rect x="3.4" y="2.2" width="1.4" height="1.2" fill="#ececec"/><path d="M1 1.2h0.8M1.6 2.6h0.8M6 1h0.8M5.6 2.4h0.8" stroke="#9a9a9a" stroke-width="0.7"/></svg>
<svg style="left:1.2000000000000002px;top:273.46px" width="8" height="8" viewBox="0 0 8 8"><path d="M1 5.4L4.4 2L6.8 4.4L4.4 6.8H2.4Z" fill="#ececec"/><path d="M1 7.2H7" stroke="#c04040" stroke-width="0.6"/></svg>
<svg style="left:1.2000000000000002px;top:286.53px" width="8" height="8" viewBox="0 0 8 8"><path d="M1 6.8C2 3 5 5.4 7 1.2" stroke="#ececec" stroke-width="0.9" fill="none"/><circle cx="1.4" cy="6.6" r="0.9" fill="#ececec"/><circle cx="6.8" cy="1.4" r="0.9" fill="#ececec"/></svg>
<span class="t" style="left:-95.0px;width:200px;text-align:center;transform-origin:50% 50%;top:299.26px;font-size:7.4px;line-height:8.88px;color:#dedede;font-weight:normal;transform:scaleX(0.95);">A</span>
<svg style="left:1.2000000000000002px;top:312.67px" width="8" height="8" viewBox="0 0 8 8"><path d="M1.6 1H4.6L6.4 2.8V7H1.6Z" fill="none" stroke="#ececec" stroke-width="0.9"/></svg>
<svg style="left:1.2000000000000002px;top:325.74px" width="8" height="8" viewBox="0 0 8 8"><circle cx="3.4" cy="3.4" r="2.3" fill="none" stroke="#ececec" stroke-width="0.9"/><path d="M5 5L7 7" stroke="#ececec" stroke-width="1.1"/></svg>
<svg style="left:1.2000000000000002px;top:338.81px" width="8" height="8" viewBox="0 0 8 8"><path d="M0.8 2.4H4.6V7.2H0.8Z M3 0.8H7V5.6H5" fill="none" stroke="#ececec" stroke-width="0.8"/></svg>
<div class="r" style="left:574.8px;top:36px;width:13.400000000000091px;height:366px;background:#363636;"></div>
<div class="r" style="left:574.8px;top:43.8px;width:8.3px;height:351px;background:#2b2b2b;"></div>
<div class="r" style="left:577.1px;top:163.9px;width:3.5px;height:111.4px;background:#a2a2a2;border-radius:1.8px;"></div>
<svg style="left:576.4px;top:37.4px" width="6.4" height="5.6" viewBox="0 0 6.4 5.6"><rect x="0.4" y="0.4" width="5.6" height="3.6" fill="none" stroke="#d8d8d8" stroke-width="0.7"/><path d="M2 5.2H4.4M3.2 4V5.2" stroke="#d8d8d8" stroke-width="0.7"/></svg>
<div class="r" style="left:584.9px;top:217.3px;width:1.0px;height:1.0px;background:#e0e0e0;border-radius:50%;"></div>
<div class="r" style="left:584.9px;top:219.20000000000002px;width:1.0px;height:1.0px;background:#e0e0e0;border-radius:50%;"></div>
<div class="r" style="left:584.9px;top:221.10000000000002px;width:1.0px;height:1.0px;background:#e0e0e0;border-radius:50%;"></div>
<div class="r" style="left:588.2px;top:38.2px;width:159.39999999999998px;height:321.6px;background:#2d2d2d;"></div>
<div class="r" style="left:588.2px;top:38.2px;width:159.39999999999998px;height:14.4px;background:#292929;"></div>
<div class="r" style="left:616.8px;top:38.2px;width:55.6px;height:14.4px;background:#313131;"></div>
<div class="r" style="left:616.8px;top:51.0px;width:55.6px;height:1.5px;background:#1a52a4;"></div>
<svg style="left:596.2px;top:42.2px" width="7" height="7" viewBox="0 0 7 7"><path d="M0.4 1.2H4.2M1.6 3.2H5.8" stroke="#2a9cf4" stroke-width="1.1"/><path d="M2.2 5.2H6.6" stroke="#f0f0f0" stroke-width="1.1"/></svg>
<svg style="left:621.4px;top:42px" width="7" height="7" viewBox="0 0 7 7"><rect x="0.5" y="0.8" width="4.6" height="5.4" fill="none" stroke="#d8d8d8" stroke-width="0.6"/><path d="M2 5.6L5.8 1.2L6.4 1.8L2.8 6Z" fill="#e8e8e8"/><path d="M1.6 6.2L2.6 5" stroke="#3a9cf0" stroke-width="0.8"/></svg>
<span class="t" style="left:629.7px;transform-origin:0 50%;top:42.30px;font-size:5.0px;line-height:6.00px;color:#ececec;font-weight:normal;transform:scaleX(0.93);">Fill and Stroke</span>
<svg style="left:662.4px;top:43.4px" width="4" height="4" viewBox="0 0 4 4"><path d="M0.4 0.4L3.6 3.6M3.6 0.4L0.4 3.6" stroke="#e4e4e4" stroke-width="0.6"/></svg>
<svg style="left:681.4px;top:42.2px" width="7" height="7" viewBox="0 0 7 7"><path d="M1 6L5.6 1.4" stroke="#d8d8d8" stroke-width="0.8"/><circle cx="2.2" cy="4.8" r="1" fill="#d8d8d8"/><circle cx="4.6" cy="2.4" r="1" fill="#d8d8d8"/><circle cx="6" cy="1" r="0.6" fill="#d8d8d8"/></svg>
<div class="r" style="left:735.4px;top:39.6px;width:11.4px;height:11.4px;background:#313131;border-radius:1.5px;"></div>
<svg style="left:738.6px;top:43.6px" width="5" height="3.4" viewBox="0 0 5 3.4"><path d="M0.4 0.5L2.5 2.7L4.6 0.5" stroke="#c8c8c8" stroke-width="0.7" fill="none"/></svg>
<div class="r" style="left:588.2px;top:52.5px;width:159.39999999999998px;height:0.5px;background:#232323;"></div>
<div class="r" style="left:588.2px;top:64.9px;width:159.39999999999998px;height:0.5px;background:#252525;"></div>
<div class="r" style="left:594.9px;top:57.0px;width:4.8px;height:4.8px;background:#f2f2f2;border-radius:0.5px;"></div>
<span class="t" style="left:602.4px;transform-origin:0 50%;top:56.20px;font-size:5.0px;line-height:6.00px;color:#dcdcdc;font-weight:normal;transform:scaleX(0.93);">Fill</span>
<div class="r" style="left:618px;top:57.1px;width:3.3px;height:3.3px;border:0.55px solid #dcdcdc;border-radius:0.9px;"></div>
<span class="t" style="left:625.2px;transform-origin:0 50%;top:56.20px;font-size:5.0px;line-height:6.00px;color:#ececec;font-weight:normal;transform:scaleX(0.93);">Stroke paint</span>
<div class="r" style="left:614.4px;top:63.6px;width:38.6px;height:1.3px;background:#1a52a4;"></div>
<svg style="left:658.6px;top:56.6px" width="7" height="6" viewBox="0 0 7 6"><path d="M0.6 1.4H4.4" stroke="#3a9cf0" stroke-width="0.8"/><path d="M4.2 0.2L6.2 1.4L4.2 2.6Z" fill="#3a9cf0"/><path d="M0.6 3.6H6.2" stroke="#d0d0d0" stroke-width="0.6" stroke-dasharray="1 0.6"/><path d="M0.6 5.2H6.2" stroke="#d0d0d0" stroke-width="0.7"/></svg>
<span class="t" style="left:666.8px;transform-origin:0 50%;top:56.20px;font-size:5.0px;line-height:6.00px;color:#dcdcdc;font-weight:normal;transform:scaleX(0.93);">Stroke style</span>
<svg style="left:593.8px;top:69.4px" width="4.4" height="4.4" viewBox="0 0 4.4 4.4"><path d="M0.6 0.6L3.8 3.8M3.8 0.6L0.6 3.8" stroke="#f0f0f0" stroke-width="0.95"/></svg>
<svg style="left:603.5px;top:67.7px" width="7.6" height="7.6" viewBox="0 0 7.6 7.6"><rect x="0.3" y="0.3" width="7" height="7" fill="#1a9cf0" stroke="#0c5fa0" stroke-width="0.4"/></svg>
<svg style="left:614.7px;top:67.7px" width="7.6" height="7.6" viewBox="0 0 7.6 7.6"><defs><linearGradient id="lg1"><stop offset="0" stop-color="#1a9cf0"/><stop offset="1" stop-color="#d8ecfb"/></linearGradient></defs><rect x="0.3" y="0.3" width="7" height="7" fill="url(#lg1)" stroke="#7ab0d8" stroke-width="0.4"/></svg>
<svg style="left:625.9000000000001px;top:67.7px" width="7.6" height="7.6" viewBox="0 0 7.6 7.6"><defs><radialGradient id="rg1"><stop offset="0.3" stop-color="#1a9cf0"/><stop offset="1" stop-color="#d8ecfb"/></radialGradient></defs><rect x="0.3" y="0.3" width="7" height="7" fill="url(#rg1)" stroke="#9cc4e4" stroke-width="0.4"/></svg>
<svg style="left:637.0px;top:67.7px" width="7.6" height="7.6" viewBox="0 0 7.6 7.6"><rect x="0.3" y="0.3" width="7" height="7" fill="#e4f0fa"/><path d="M0.3 0.3H4L0.3 4Z M7.3 7.3H3.6L7.3 3.6Z" fill="#1a9cf0"/><path d="M0.3 5.4L5.4 0.3" stroke="#6ab8f0" stroke-width="1.2"/></svg>
<svg style="left:648.1px;top:67.7px" width="7.6" height="7.6" viewBox="0 0 7.6 7.6"><path d="M0.4 2.4H7.2M0.4 5.2H7.2M2.4 0.4V7.2M5.2 0.4V7.2" stroke="#f0f0f0" stroke-width="0.8"/></svg>
<svg style="left:659.4000000000001px;top:67.7px" width="7.6" height="7.6" viewBox="0 0 7.6 7.6"><rect x="0.4" y="0.4" width="6.8" height="6.8" fill="none" stroke="#d8d8d8" stroke-width="0.7"/><rect x="1.7" y="1.7" width="4.2" height="4.2" fill="#1a9cf0"/></svg>
<div class="r" style="left:669.6px;top:66.4px;width:9.8px;height:10.2px;background:#1f4582;border-radius:1.6px;"></div>
<span class="t" style="left:574.5px;width:200px;text-align:center;transform-origin:50% 50%;top:67.64px;font-size:6.6px;line-height:7.92px;color:#ffffff;font-weight:bold;transform:scaleX(0.93);">?</span>
<div class="r" style="left:723.2px;top:66.3px;width:10.4px;height:10.3px;background:#1f4582;border-radius:1.6px;"></div>
<svg style="left:725px;top:68px" width="7" height="7" viewBox="0 0 7 7"><path d="M0.5 0.5H2.5V3.6A1 1 0 0 0 4.5 3.6V0.5H6.5V3.7A3 3 0 0 1 0.5 3.7Z" fill="#f4f4f4"/></svg>
<svg style="left:736px;top:68.2px" width="7.4" height="7" viewBox="0 0 7.4 7"><path d="M0.4 1.2C1.2 0 3 0.4 3.7 1.8C4.4 0.4 6.2 0 7 1.2V4C7 7 0.4 7 0.4 4Z" fill="#f2f2f2"/></svg>
<span class="t" style="left:591.8px;transform-origin:0 50%;top:79.20px;font-size:5.0px;line-height:6.00px;color:#f0f0f0;font-weight:bold;transform:scaleX(0.91);">Paint is undefined</span>
<div class="r" style="left:588.5px;top:359.3px;width:158.79999999999998px;height:0.8px;background:#232323;"></div>
<div class="r" style="left:588.4000000000001px;top:65.4px;width:0.7px;height:294.5px;background:#262626;"></div>
<div class="r" style="left:746.7px;top:65.4px;width:0.7px;height:294.5px;background:#262626;"></div>
<div class="r" style="left:588.2px;top:360.2px;width:159.39999999999998px;height:40.6px;background:#2d2d2d;"></div>
<span class="t" style="right:65.60000000000002px;transform-origin:100% 50%;top:366.36px;font-size:4.9px;line-height:5.88px;color:#d8d8d8;font-weight:normal;transform:scaleX(0.93);">Blend mode:</span>
<div class="r" style="left:704.8px;top:362.3px;width:40.8px;height:12px;background:#323232;border-radius:2px;box-shadow:0 0 0 0.5px #3a3a3a;"></div>
<span class="t" style="left:708.8px;transform-origin:0 50%;top:366.36px;font-size:4.9px;line-height:5.88px;color:#e0e0e0;font-weight:normal;transform:scaleX(0.93);">Normal</span>
<svg style="left:737px;top:367px" width="4.6" height="3" viewBox="0 0 4.6 3"><path d="M0 0h4.6L2.3 2.8z" fill="#f0f0f0"/></svg>
<div class="r" style="left:590.4px;top:376.8px;width:125.6px;height:10.2px;background:#242424;border-radius:1.4px;box-shadow:0 0 0 0.5px #383838;"></div>
<span class="t" style="left:592.3px;transform-origin:0 50%;top:379.63px;font-size:4.95px;line-height:5.94px;color:#ececec;font-weight:normal;transform:scaleX(0.95);">Blur (%)</span>
<span class="t" style="left:719.8px;transform-origin:0 50%;top:379.88px;font-size:4.7px;line-height:5.64px;color:#e0e0e0;font-weight:normal;transform:scaleX(0.93);">0,0</span>
<div class="r" style="left:590.4px;top:389.4px;width:125.6px;height:9.8px;background:#1a57aa;border-radius:1.4px;"></div>
<span class="t" style="left:592.3px;transform-origin:0 50%;top:391.53px;font-size:4.95px;line-height:5.94px;color:#ffffff;font-weight:normal;transform:scaleX(0.95);">Opacity (%)</span>
<span class="t" style="left:719.8px;transform-origin:0 50%;top:391.98px;font-size:4.7px;line-height:5.64px;color:#e0e0e0;font-weight:normal;transform:scaleX(0.93);">100,0</span>
<svg style="left:0;top:0" width="768" height="432"><path d="M733.2 382.3h4" stroke="#5c5c5c" stroke-width="0.7"/><path d="M739.7 382.3h4.4M741.9 380.1v4.4" stroke="#f2f2f2" stroke-width="0.9"/><path d="M733.2 394.6h4" stroke="#f2f2f2" stroke-width="0.9"/><path d="M739.7 394.6h4.4M741.9 392.4v4.4" stroke="#555" stroke-width="0.7"/></svg>
<div class="r" style="left:747.6px;top:36px;width:20.399999999999977px;height:366px;background:#353535;"></div>
<svg style="left:754.6px;top:41px" width="8" height="8" viewBox="0 0 8 8"><path d="M1.4 1H4.6L6.2 2.6V7H1.4Z" fill="none" stroke="#ececec" stroke-width="0.9"/><circle cx="6.4" cy="1.2" r="0.8" fill="#27b33b"/></svg>
<svg style="left:754.6px;top:55px" width="8" height="8" viewBox="0 0 8 8"><path d="M0.8 6.8V1.6H3L3.8 2.6H6.6V3.6H2.2L0.8 6.8Z M2.4 4H7.6L6.4 6.8H1.2Z" fill="#ececec"/></svg>
<svg style="left:754.6px;top:70.6px" width="8" height="8" viewBox="0 0 8 8"><path d="M1 4.6H7V7H1Z" fill="#ececec"/><path d="M4 0.6L5.8 3H4.6V4.4H3.4V3H2.2Z" fill="#27b33b"/></svg>
<svg style="left:754.6px;top:84.3px" width="8" height="8" viewBox="0 0 8 8"><rect x="2.2" y="1" width="3.6" height="2" fill="#ececec"/><rect x="0.8" y="3" width="6.4" height="2.8" rx="0.5" fill="#ececec"/><rect x="2.2" y="5" width="3.6" height="2.2" fill="#ececec" stroke="#353535" stroke-width="0.4"/></svg>
<svg style="left:754.6px;top:100.4px" width="8" height="8" viewBox="0 0 8 8"><path d="M2 1H4.8L6.4 2.6V7H2Z" fill="none" stroke="#ececec" stroke-width="0.9"/><path d="M3.6 4.4L1.2 4.4M2.2 3.2L1 4.4L2.2 5.6" stroke="#27b33b" stroke-width="0.9" fill="none"/></svg>
<svg style="left:754.6px;top:115.8px" width="8" height="8" viewBox="0 0 8 8"><path d="M1.4 1H4.4L6 2.6V7H1.4Z" fill="none" stroke="#ececec" stroke-width="0.9"/><path d="M4.6 4.6H7.2M6.2 3.4L7.4 4.6L6.2 5.8" stroke="#27b33b" stroke-width="0.9" fill="none"/></svg>
<svg style="left:754.6px;top:132px" width="8" height="8" viewBox="0 0 8 8"><path d="M2 3.2H5C7 3.2 7 6.4 5 6.4H3.6" stroke="#ececec" stroke-width="0.9" fill="none"/><path d="M3 1.6L1.2 3.2L3 4.8Z" fill="#ececec"/></svg>
<svg style="left:754.6px;top:147.4px" width="8" height="8" viewBox="0 0 8 8"><path d="M6 3.2H3C1 3.2 1 6.4 3 6.4H4.4" stroke="#ececec" stroke-width="0.9" fill="none"/><path d="M5 1.6L6.8 3.2L5 4.8Z" fill="#ececec"/></svg>
<svg style="left:754.6px;top:163px" width="8" height="8" viewBox="0 0 8 8"><rect x="1" y="1" width="4.2" height="4.2" fill="#ececec"/><rect x="3" y="3" width="4.2" height="4.2" fill="#ececec" stroke="#353535" stroke-width="0.5"/></svg>
<svg style="left:754.6px;top:178px" width="8" height="8" viewBox="0 0 8 8"><path d="M1.6 1L5.6 5.6M6.4 1L2.4 5.6" stroke="#ececec" stroke-width="0.8"/><circle cx="2" cy="6.2" r="1" fill="none" stroke="#ececec" stroke-width="0.7"/><circle cx="6" cy="6.2" r="1" fill="none" stroke="#ececec" stroke-width="0.7"/></svg>
<svg style="left:754.6px;top:193.6px" width="8" height="8" viewBox="0 0 8 8"><rect x="1.6" y="1.4" width="4.8" height="5.8" fill="#ececec"/><rect x="2.8" y="0.6" width="2.4" height="1.6" fill="#bdbdbd"/><rect x="2.6" y="3" width="2.8" height="3" fill="#9a9a9a"/></svg>
<svg style="left:754.6px;top:209.4px" width="8" height="8" viewBox="0 0 8 8"><circle cx="3.6" cy="3.6" r="2.6" fill="#ececec"/><path d="M5.4 5.4L7.2 7.2" stroke="#ececec" stroke-width="1.2"/></svg>
<svg style="left:754.6px;top:224.4px" width="8" height="8" viewBox="0 0 8 8"><circle cx="3.6" cy="3.6" r="2.5" fill="none" stroke="#ececec" stroke-width="1"/><rect x="2.4" y="2.4" width="2.4" height="2.4" fill="#ececec"/><path d="M5.4 5.4L7.2 7.2" stroke="#ececec" stroke-width="1.2"/></svg>
<svg style="left:754.6px;top:239px" width="8" height="8" viewBox="0 0 8 8"><circle cx="3.6" cy="3.6" r="2.6" fill="#ececec"/><path d="M3.6 1.6V5.6" stroke="#353535" stroke-width="0.5"/><path d="M5.4 5.4L7.2 7.2" stroke="#ececec" stroke-width="1.2"/></svg>
<svg style="left:754.6px;top:253px" width="8" height="8" viewBox="0 0 8 8"><rect x="2" y="2" width="4" height="4" fill="none" stroke="#8a8a8a" stroke-width="0.6"/><path d="M1 1L2.4 2.4M7 1L5.6 2.4M1 7L2.4 5.6M7 7L5.6 5.6" stroke="#8a8a8a" stroke-width="0.6"/></svg>
<div class="r" style="left:751.8px;top:267.6px;width:13.4px;height:12px;background:#323232;border-radius:2px;box-shadow:0 0 0 0.5px #2a2a2a;"></div>
<svg style="left:756.2px;top:272.4px" width="4.4" height="3" viewBox="0 0 4.4 3"><path d="M0 0h4.4L2.2 2.6z" fill="#f0f0f0"/></svg>
<div class="r" style="left:12.6px;top:395.0px;width:562.2px;height:8.2px;background:#272727;"></div>
<div class="r" style="left:574.8px;top:395.4px;width:8.3px;height:7.4px;background:#323232;"></div>
<div class="r" style="left:87.6px;top:397.8px;width:398.6px;height:3.3px;background:linear-gradient(#b2b2b2,#9c9c9c);border-radius:1.8px;"></div>
<div class="r" style="left:0px;top:402px;width:768px;height:30px;background:#353535;"></div>
<div class="r" style="left:0px;top:403.6px;width:742.2px;height:14.4px;background:#2a2a2a;"></div>
<div class="r" style="left:0.8px;top:404.2px;width:12.7px;height:13.199999999999989px;background:#ffffff;"></div>
<svg style="left:0.8px;top:404.2px" width="12.7" height="13.199999999999989" viewBox="0 0 12.7 13.2"><path d="M0.6 0.6L12.1 12.6M12.1 0.6L0.6 12.6" stroke="#cc1420" stroke-width="1.0"/></svg>
<div class="r" style="left:14.6px;top:404.2px;width:12.3px;height:13.199999999999989px;background:#000000;"></div>
<div class="r" style="left:27.9px;top:404.2px;width:12.5px;height:13.199999999999989px;background:#808080;"></div>
<div class="r" style="left:41.5px;top:404.2px;width:12.9px;height:13.199999999999989px;background:#ffffff;"></div>
<svg style="left:0;top:0" width="768" height="432" viewBox="0 0 768 432"><rect x="55.15" y="404.2" width="8.50" height="6.45" fill="#1a1a1a"/><rect x="55.15" y="410.95" width="8.50" height="6.45" fill="#d4aa00"/><rect x="63.95" y="404.2" width="8.50" height="6.45" fill="#333333"/><rect x="63.95" y="410.95" width="8.50" height="6.45" fill="#ffcc00"/><rect x="72.75" y="404.2" width="8.50" height="6.45" fill="#4d4d4d"/><rect x="72.75" y="410.95" width="8.50" height="6.45" fill="#ffd42a"/><rect x="81.55" y="404.2" width="8.50" height="6.45" fill="#666666"/><rect x="81.55" y="410.95" width="8.50" height="6.45" fill="#ffdd55"/><rect x="90.35" y="404.2" width="8.50" height="6.45" fill="#999999"/><rect x="90.35" y="410.95" width="8.50" height="6.45" fill="#ffe680"/><rect x="99.15" y="404.2" width="8.50" height="6.45" fill="#b3b3b3"/><rect x="99.15" y="410.95" width="8.50" height="6.45" fill="#ffeeaa"/><rect x="107.95" y="404.2" width="8.50" height="6.45" fill="#cccccc"/><rect x="107.95" y="410.95" width="8.50" height="6.45" fill="#fff6d5"/><rect x="116.75" y="404.2" width="8.50" height="6.45" fill="#e6e6e6"/><rect x="116.75" y="410.95" width="8.50" height="6.45" fill="#28220b"/><rect x="125.55" y="404.2" width="8.50" height="6.45" fill="#ececec"/><rect x="125.55" y="410.95" width="8.50" height="6.45" fill="#504416"/><rect x="134.35" y="404.2" width="8.50" height="6.45" fill="#f2f2f2"/><rect x="134.35" y="410.95" width="8.50" height="6.45" fill="#786721"/><rect x="143.15" y="404.2" width="8.50" height="6.45" fill="#f9f9f9"/><rect x="143.15" y="410.95" width="8.50" height="6.45" fill="#a0892c"/><rect x="151.95" y="404.2" width="8.50" height="6.45" fill="#800000"/><rect x="151.95" y="410.95" width="8.50" height="6.45" fill="#c8ab37"/><rect x="160.75" y="404.2" width="8.50" height="6.45" fill="#ff0000"/><rect x="160.75" y="410.95" width="8.50" height="6.45" fill="#d3bc5f"/><rect x="169.55" y="404.2" width="8.50" height="6.45" fill="#808000"/><rect x="169.55" y="410.95" width="8.50" height="6.45" fill="#decd87"/><rect x="178.35" y="404.2" width="8.50" height="6.45" fill="#ffff00"/><rect x="178.35" y="410.95" width="8.50" height="6.45" fill="#e9ddaf"/><rect x="187.15" y="404.2" width="8.30" height="6.45" fill="#008000"/><rect x="187.15" y="410.95" width="8.30" height="6.45" fill="#f4eed7"/><rect x="195.75" y="404.2" width="8.10" height="6.45" fill="#00ff00"/><rect x="195.75" y="410.95" width="8.10" height="6.45" fill="#24221c"/><rect x="204.15" y="404.2" width="8.10" height="6.45" fill="#008080"/><rect x="204.15" y="410.95" width="8.10" height="6.45" fill="#484537"/><rect x="212.55" y="404.2" width="8.10" height="6.45" fill="#00ffff"/><rect x="212.55" y="410.95" width="8.10" height="6.45" fill="#6c6753"/><rect x="220.95" y="404.2" width="8.10" height="6.45" fill="#000080"/><rect x="220.95" y="410.95" width="8.10" height="6.45" fill="#918a6f"/><rect x="229.35" y="404.2" width="8.10" height="6.45" fill="#0000ff"/><rect x="229.35" y="410.95" width="8.10" height="6.45" fill="#aca793"/><rect x="237.75" y="404.2" width="8.10" height="6.45" fill="#800080"/><rect x="237.75" y="410.95" width="8.10" height="6.45" fill="#c8c4b7"/><rect x="246.15" y="404.2" width="8.10" height="6.45" fill="#ff00ff"/><rect x="246.15" y="410.95" width="8.10" height="6.45" fill="#e3e2db"/><rect x="254.55" y="404.2" width="8.10" height="6.45" fill="#2b0000"/><rect x="254.55" y="410.95" width="8.10" height="6.45" fill="#222b00"/><rect x="262.95" y="404.2" width="8.10" height="6.45" fill="#550000"/><rect x="262.95" y="410.95" width="8.10" height="6.45" fill="#445500"/><rect x="271.35" y="404.2" width="8.10" height="6.45" fill="#800000"/><rect x="271.35" y="410.95" width="8.10" height="6.45" fill="#668000"/><rect x="279.75" y="404.2" width="8.10" height="6.45" fill="#aa0000"/><rect x="279.75" y="410.95" width="8.10" height="6.45" fill="#88aa00"/><rect x="288.15" y="404.2" width="8.10" height="6.45" fill="#d40000"/><rect x="288.15" y="410.95" width="8.10" height="6.45" fill="#aad400"/><rect x="296.55" y="404.2" width="8.10" height="6.45" fill="#ff0000"/><rect x="296.55" y="410.95" width="8.10" height="6.45" fill="#ccff00"/><rect x="304.95" y="404.2" width="8.10" height="6.45" fill="#ff2a2a"/><rect x="304.95" y="410.95" width="8.10" height="6.45" fill="#d4ff2a"/><rect x="313.35" y="404.2" width="8.10" height="6.45" fill="#ff5555"/><rect x="313.35" y="410.95" width="8.10" height="6.45" fill="#ddff55"/><rect x="321.75" y="404.2" width="8.10" height="6.45" fill="#ff8080"/><rect x="321.75" y="410.95" width="8.10" height="6.45" fill="#e5ff80"/><rect x="330.15" y="404.2" width="8.10" height="6.45" fill="#ffaaaa"/><rect x="330.15" y="410.95" width="8.10" height="6.45" fill="#eeffaa"/><rect x="338.55" y="404.2" width="8.10" height="6.45" fill="#ffd5d5"/><rect x="338.55" y="410.95" width="8.10" height="6.45" fill="#f6ffd5"/><rect x="346.95" y="404.2" width="8.10" height="6.45" fill="#280b0b"/><rect x="346.95" y="410.95" width="8.10" height="6.45" fill="#22280b"/><rect x="355.35" y="404.2" width="8.10" height="6.45" fill="#501616"/><rect x="355.35" y="410.95" width="8.10" height="6.45" fill="#445016"/><rect x="363.75" y="404.2" width="8.10" height="6.45" fill="#782121"/><rect x="363.75" y="410.95" width="8.10" height="6.45" fill="#677821"/><rect x="372.15" y="404.2" width="8.10" height="6.45" fill="#a02c2c"/><rect x="372.15" y="410.95" width="8.10" height="6.45" fill="#89a02c"/><rect x="380.55" y="404.2" width="8.10" height="6.45" fill="#c83737"/><rect x="380.55" y="410.95" width="8.10" height="6.45" fill="#abc837"/><rect x="388.95" y="404.2" width="8.10" height="6.45" fill="#d35f5f"/><rect x="388.95" y="410.95" width="8.10" height="6.45" fill="#bcd35f"/><rect x="397.35" y="404.2" width="8.10" height="6.45" fill="#de8787"/><rect x="397.35" y="410.95" width="8.10" height="6.45" fill="#cdde87"/><rect x="405.75" y="404.2" width="8.10" height="6.45" fill="#e9afaf"/><rect x="405.75" y="410.95" width="8.10" height="6.45" fill="#dde9af"/><rect x="414.15" y="404.2" width="8.10" height="6.45" fill="#f4d7d7"/><rect x="414.15" y="410.95" width="8.10" height="6.45" fill="#eef4d7"/><rect x="422.55" y="404.2" width="8.10" height="6.45" fill="#241c1c"/><rect x="422.55" y="410.95" width="8.10" height="6.45" fill="#23241c"/><rect x="430.95" y="404.2" width="8.10" height="6.45" fill="#483737"/><rect x="430.95" y="410.95" width="8.10" height="6.45" fill="#454837"/><rect x="439.35" y="404.2" width="8.10" height="6.45" fill="#6c5353"/><rect x="439.35" y="410.95" width="8.10" height="6.45" fill="#676c53"/><rect x="447.75" y="404.2" width="8.10" height="6.45" fill="#916f6f"/><rect x="447.75" y="410.95" width="8.10" height="6.45" fill="#8a916f"/><rect x="456.15" y="404.2" width="8.10" height="6.45" fill="#ac9393"/><rect x="456.15" y="410.95" width="8.10" height="6.45" fill="#a7ac93"/><rect x="464.55" y="404.2" width="8.10" height="6.45" fill="#c8b7b7"/><rect x="464.55" y="410.95" width="8.10" height="6.45" fill="#c4c8b7"/><rect x="472.95" y="404.2" width="8.10" height="6.45" fill="#e3dbdb"/><rect x="472.95" y="410.95" width="8.10" height="6.45" fill="#e2e3db"/><rect x="481.35" y="404.2" width="8.10" height="6.45" fill="#2b1100"/><rect x="481.35" y="410.95" width="8.10" height="6.45" fill="#112b00"/><rect x="489.75" y="404.2" width="8.10" height="6.45" fill="#552200"/><rect x="489.75" y="410.95" width="8.10" height="6.45" fill="#225500"/><rect x="498.15" y="404.2" width="8.10" height="6.45" fill="#803300"/><rect x="498.15" y="410.95" width="8.10" height="6.45" fill="#338000"/><rect x="506.55" y="404.2" width="8.10" height="6.45" fill="#aa4400"/><rect x="506.55" y="410.95" width="8.10" height="6.45" fill="#44aa00"/><rect x="514.95" y="404.2" width="8.10" height="6.45" fill="#d45500"/><rect x="514.95" y="410.95" width="8.10" height="6.45" fill="#55d400"/><rect x="523.35" y="404.2" width="8.10" height="6.45" fill="#ff6600"/><rect x="523.35" y="410.95" width="8.10" height="6.45" fill="#66ff00"/><rect x="531.75" y="404.2" width="8.10" height="6.45" fill="#ff7f2a"/><rect x="531.75" y="410.95" width="8.10" height="6.45" fill="#7fff2a"/><rect x="540.15" y="404.2" width="8.10" height="6.45" fill="#ff9955"/><rect x="540.15" y="410.95" width="8.10" height="6.45" fill="#99ff55"/><rect x="548.55" y="404.2" width="8.10" height="6.45" fill="#ffb380"/><rect x="548.55" y="410.95" width="8.10" height="6.45" fill="#b3ff80"/><rect x="556.95" y="404.2" width="8.10" height="6.45" fill="#ffccaa"/><rect x="556.95" y="410.95" width="8.10" height="6.45" fill="#ccffaa"/><rect x="565.35" y="404.2" width="8.10" height="6.45" fill="#ffe6d5"/><rect x="565.35" y="410.95" width="8.10" height="6.45" fill="#e5ffd5"/><rect x="573.75" y="404.2" width="8.10" height="6.45" fill="#28170b"/><rect x="573.75" y="410.95" width="8.10" height="6.45" fill="#17280b"/><rect x="582.15" y="404.2" width="8.10" height="6.45" fill="#502d16"/><rect x="582.15" y="410.95" width="8.10" height="6.45" fill="#2d5016"/><rect x="590.55" y="404.2" width="8.10" height="6.45" fill="#784421"/><rect x="590.55" y="410.95" width="8.10" height="6.45" fill="#447821"/><rect x="598.95" y="404.2" width="8.10" height="6.45" fill="#a05a2c"/><rect x="598.95" y="410.95" width="8.10" height="6.45" fill="#5aa02c"/><rect x="607.35" y="404.2" width="8.10" height="6.45" fill="#c87137"/><rect x="607.35" y="410.95" width="8.10" height="6.45" fill="#71c837"/><rect x="615.75" y="404.2" width="8.10" height="6.45" fill="#d38d5f"/><rect x="615.75" y="410.95" width="8.10" height="6.45" fill="#8dd35f"/><rect x="624.15" y="404.2" width="8.10" height="6.45" fill="#deaa87"/><rect x="624.15" y="410.95" width="8.10" height="6.45" fill="#aade87"/><rect x="632.55" y="404.2" width="8.10" height="6.45" fill="#e9c6af"/><rect x="632.55" y="410.95" width="8.10" height="6.45" fill="#c6e9af"/><rect x="640.95" y="404.2" width="8.10" height="6.45" fill="#f4e3d7"/><rect x="640.95" y="410.95" width="8.10" height="6.45" fill="#e3f4d7"/><rect x="649.35" y="404.2" width="8.10" height="6.45" fill="#241f1c"/><rect x="649.35" y="410.95" width="8.10" height="6.45" fill="#1e241c"/><rect x="657.75" y="404.2" width="8.10" height="6.45" fill="#483e37"/><rect x="657.75" y="410.95" width="8.10" height="6.45" fill="#3c4837"/><rect x="666.15" y="404.2" width="8.10" height="6.45" fill="#6c5d53"/><rect x="666.15" y="410.95" width="8.10" height="6.45" fill="#5a6c53"/><rect x="674.55" y="404.2" width="8.10" height="6.45" fill="#917c6f"/><rect x="674.55" y="410.95" width="8.10" height="6.45" fill="#78916f"/><rect x="682.95" y="404.2" width="8.10" height="6.45" fill="#ac9d93"/><rect x="682.95" y="410.95" width="8.10" height="6.45" fill="#98ac93"/><rect x="691.35" y="404.2" width="8.10" height="6.45" fill="#c8beb7"/><rect x="691.35" y="410.95" width="8.10" height="6.45" fill="#bac8b7"/><rect x="699.75" y="404.2" width="8.10" height="6.45" fill="#e3dedb"/><rect x="699.75" y="410.95" width="8.10" height="6.45" fill="#dde3db"/><rect x="708.15" y="404.2" width="8.10" height="6.45" fill="#2b2200"/><rect x="708.15" y="410.95" width="8.10" height="6.45" fill="#002b00"/><rect x="716.55" y="404.2" width="8.10" height="6.45" fill="#554400"/><rect x="716.55" y="410.95" width="8.10" height="6.45" fill="#005500"/><rect x="724.95" y="404.2" width="8.10" height="6.45" fill="#806600"/><rect x="724.95" y="410.95" width="8.10" height="6.45" fill="#008000"/><rect x="733.35" y="404.2" width="8.10" height="6.45" fill="#aa8800"/><rect x="733.35" y="410.95" width="8.10" height="6.45" fill="#00aa00"/></svg>
<div class="r" style="left:578.1px;top:398.3px;width:1.5px;height:1.5px;background:#ececec;"></div>
<svg style="left:752.6px;top:408.6px" width="5" height="3.4" viewBox="0 0 5 3.4"><path d="M0.4 0.5L2.5 2.7L4.6 0.5" stroke="#d8d8d8" stroke-width="0.7" fill="none"/></svg>
<svg style="left:761.4px;top:409px" width="6" height="7" viewBox="0 0 6 7"><path d="M0 1.5H5.6M0 3.5H5.6M0 5.5H5.6" stroke="#f0f0f0" stroke-width="0.75" shape-rendering="crispEdges"/></svg>
<span class="t" style="right:747.6px;transform-origin:100% 50%;top:418.76px;font-size:4.9px;line-height:5.88px;color:#94a8c0;font-weight:normal;transform:scaleX(0.98);">Fill: <b style="color:#c8d4e4">m</b></span>
<span class="t" style="right:747.6px;transform-origin:100% 50%;top:425.86px;font-size:4.9px;line-height:5.88px;color:#94a8c0;font-weight:normal;transform:scaleX(0.98);">Stroke: <b style="color:#c8d4e4">m</b></span>
<div class="r" style="left:22.2px;top:418.8px;width:20.4px;height:6px;background:#88c8fa;border-radius:0.6px;"></div>
<span class="t" style="left:26px;transform-origin:0 50%;top:425.86px;font-size:4.9px;line-height:5.88px;color:#e8e8e8;font-weight:bold;transform:scaleX(0.95);">Unset</span>
<span class="t" style="left:47.3px;transform-origin:0 50%;top:425.98px;font-size:4.7px;line-height:5.64px;color:#c8c8c8;font-weight:normal;transform:scaleX(0.93);">0,265</span>
<span class="t" style="left:62.4px;transform-origin:0 50%;top:422.42px;font-size:4.8px;line-height:5.76px;color:#d0d0d0;font-weight:normal;transform:scaleX(0.93);">O:</span>
<div class="r" style="left:68px;top:418.8px;width:30px;height:12px;background:#2d2d2d;border-radius:2px;box-shadow:0 0 0 0.5px #292929;"></div>
<span class="t" style="left:72.4px;transform-origin:0 50%;top:422.42px;font-size:4.8px;line-height:5.76px;color:#e0e0e0;font-weight:normal;transform:scaleX(0.93);">100</span>
<svg style="left:0;top:0" width="768" height="432"><path d="M85.2 424.9h4.6" stroke="#f0f0f0" stroke-width="0.9"/><path d="M92.8 424.9h4.4M95 422.7v4.4" stroke="#5a5a5a" stroke-width="0.8"/></svg>
<div class="r" style="left:104.4px;top:421.2px;width:1.3px;height:7.2px;background:#3a78e0;"></div>
<span class="t" style="left:108px;transform-origin:0 50%;top:422.36px;font-size:4.9px;line-height:5.88px;color:#b8c8e0;font-weight:normal;transform:scaleX(0.93);">Layer 1</span>
<svg style="left:130.6px;top:421.8px" width="7" height="6" viewBox="0 0 7 6"><path d="M0.4 3C1.6 0.6 5.4 0.6 6.6 3C5.4 5.4 1.6 5.4 0.4 3Z" fill="none" stroke="#e4e4e4" stroke-width="0.7"/><circle cx="3.5" cy="3" r="1.1" fill="#e4e4e4"/></svg>
<svg style="left:145px;top:420.6px" width="7" height="8" viewBox="0 0 7 8"><rect x="0.4" y="3.6" width="4.6" height="3.6" rx="0.4" fill="#f0f0f0"/><path d="M3.6 3.6V2.6a1.3 1.3 0 0 1 2.6 0v0.8" stroke="#f0f0f0" stroke-width="0.8" fill="none"/></svg>
<span class="t" style="left:159px;transform-origin:0 50%;top:421.90px;font-size:5.0px;line-height:6.00px;color:#dcdcdc;font-weight:normal;transform:scaleX(0.943);"><b>2</b> objects selected of type <b>Path</b> in layer <b>Layer 1</b>. Click selection again to toggle scale/rotation handles.</span>
<span class="t" style="left:657.4px;transform-origin:0 50%;top:418.78px;font-size:4.7px;line-height:5.64px;color:#c4c4c4;font-weight:normal;transform:scaleX(0.93);">X:</span>
<span class="t" style="right:88.60000000000002px;transform-origin:100% 50%;top:418.78px;font-size:4.7px;line-height:5.64px;color:#d8d8d8;font-weight:normal;transform:scaleX(0.93);">-25,36</span>
<span class="t" style="left:657.4px;transform-origin:0 50%;top:425.98px;font-size:4.7px;line-height:5.64px;color:#c4c4c4;font-weight:normal;transform:scaleX(0.93);">Y:</span>
<span class="t" style="right:88.60000000000002px;transform-origin:100% 50%;top:425.98px;font-size:4.7px;line-height:5.64px;color:#d8d8d8;font-weight:normal;transform:scaleX(0.93);">-3,82</span>
<span class="t" style="left:684.4px;transform-origin:0 50%;top:422.32px;font-size:4.8px;line-height:5.76px;color:#c8c8c8;font-weight:normal;transform:scaleX(0.93);">Z:</span>
<div class="r" style="left:690.4px;top:418.8px;width:30.6px;height:14px;background:#2d2d2d;border-radius:2px;box-shadow:0 0 0 0.5px #292929;"></div>
<span class="t" style="left:695px;transform-origin:0 50%;top:422.32px;font-size:4.8px;line-height:5.76px;color:#e0e0e0;font-weight:normal;transform:scaleX(0.93);">76%</span>
<span class="t" style="left:725.6px;transform-origin:0 50%;top:422.32px;font-size:4.8px;line-height:5.76px;color:#c8c8c8;font-weight:normal;transform:scaleX(0.93);">R:</span>
<div class="r" style="left:730.6px;top:418.8px;width:40px;height:14px;background:#2d2d2d;border-radius:2px;box-shadow:0 0 0 0.5px #292929;"></div>
<span class="t" style="left:736.6px;transform-origin:0 50%;top:422.32px;font-size:4.8px;line-height:5.76px;color:#e0e0e0;font-weight:normal;transform:scaleX(0.93);">0,00°</span>
<svg style="left:0;top:0" width="768" height="432"><path d="M708.1 425.3h4.6M714.9 425.3h4.6M717.2 423v4.6M751 425.3h4.6M757.9 425.3h4.6M760.2 423v4.6" stroke="#f0f0f0" stroke-width="0.9"/></svg>
<div class="r" style="left:82.1px;top:20.2px;width:102.4px;height:241.6px;background:#2f2f2f;box-shadow:0 0.5px 1.5px rgba(0,0,0,0.35);"></div>
<div class="r" style="left:82.1px;top:79.7px;width:102.4px;height:10.1px;background:#1a56a6;"></div>
<div class="r" style="left:82.1px;top:160.3px;width:102.4px;height:0.5px;background:#393939;"></div>
<div class="r" style="left:82.1px;top:200.5px;width:102.4px;height:0.5px;background:#393939;"></div>
<div class="r" style="left:82.1px;top:231.5px;width:102.4px;height:0.5px;background:#393939;"></div>
<span class="t" style="left:94.8px;transform-origin:0 50%;top:21.00px;font-size:5.0px;line-height:6.00px;color:#d6d6d6;font-weight:normal;transform:scaleX(0.93);">Object to Path</span>
<span class="t" style="right:587.4px;transform-origin:100% 50%;top:21.00px;font-size:5.0px;line-height:6.00px;color:#8c8c8c;font-weight:normal;transform:scaleX(0.93);">Shift+Ctrl+C</span>
<span class="t" style="left:94.8px;transform-origin:0 50%;top:31.10px;font-size:5.0px;line-height:6.00px;color:#d6d6d6;font-weight:normal;transform:scaleX(0.93);">Stroke to Path</span>
<span class="t" style="right:587.4px;transform-origin:100% 50%;top:31.10px;font-size:5.0px;line-height:6.00px;color:#8c8c8c;font-weight:normal;transform:scaleX(0.93);">Ctrl+Alt+C</span>
<span class="t" style="left:94.8px;transform-origin:0 50%;top:41.30px;font-size:5.0px;line-height:6.00px;color:#d6d6d6;font-weight:normal;transform:scaleX(0.93);">Trace Bitmap...</span>
<span class="t" style="right:587.4px;transform-origin:100% 50%;top:41.30px;font-size:5.0px;line-height:6.00px;color:#8c8c8c;font-weight:normal;transform:scaleX(0.93);">Shift+Alt+B</span>
<span class="t" style="left:94.8px;transform-origin:0 50%;top:51.70px;font-size:5.0px;line-height:6.00px;color:#d6d6d6;font-weight:normal;transform:scaleX(0.93);">Union</span>
<span class="t" style="right:587.4px;transform-origin:100% 50%;top:51.70px;font-size:5.0px;line-height:6.00px;color:#8c8c8c;font-weight:normal;transform:scaleX(0.93);">Ctrl++</span>
<svg style="left:85.4px;top:51.00px" width="7.2" height="7.2" viewBox="0 0 7.2 7.2"><circle cx="2.6" cy="2.6" r="2.2" fill="#f0f0f0"/><rect x="2.6" y="2.6" width="4" height="4" fill="#f0f0f0"/></svg>
<span class="t" style="left:94.8px;transform-origin:0 50%;top:61.70px;font-size:5.0px;line-height:6.00px;color:#d6d6d6;font-weight:normal;transform:scaleX(0.93);">Difference</span>
<span class="t" style="right:587.4px;transform-origin:100% 50%;top:61.70px;font-size:5.0px;line-height:6.00px;color:#8c8c8c;font-weight:normal;transform:scaleX(0.93);">Ctrl+-</span>
<svg style="left:85.4px;top:61.00px" width="7.2" height="7.2" viewBox="0 0 7.2 7.2"><circle cx="2.6" cy="2.6" r="2.2" fill="#a8187e"/><rect x="2.8" y="2.8" width="3.8" height="3.8" fill="#f0f0f0"/></svg>
<span class="t" style="left:94.8px;transform-origin:0 50%;top:71.70px;font-size:5.0px;line-height:6.00px;color:#d6d6d6;font-weight:normal;transform:scaleX(0.93);">Intersection</span>
<span class="t" style="right:587.4px;transform-origin:100% 50%;top:71.70px;font-size:5.0px;line-height:6.00px;color:#8c8c8c;font-weight:normal;transform:scaleX(0.93);">Ctrl+*</span>
<svg style="left:85.4px;top:71.00px" width="7.2" height="7.2" viewBox="0 0 7.2 7.2"><circle cx="2.6" cy="2.6" r="2.2" fill="#a8187e"/><rect x="2.8" y="2.8" width="3.8" height="3.8" fill="#a8187e"/><path d="M2.8 2.8H4.8A2.2 2.2 0 0 1 2.8 4.8Z" fill="#f0f0f0"/></svg>
<span class="t" style="left:94.8px;transform-origin:0 50%;top:81.70px;font-size:5.0px;line-height:6.00px;color:#ffffff;font-weight:normal;transform:scaleX(0.93);">Exclusion</span>
<span class="t" style="right:587.4px;transform-origin:100% 50%;top:81.70px;font-size:5.0px;line-height:6.00px;color:#b8c8e0;font-weight:normal;transform:scaleX(0.93);">Ctrl+^</span>
<svg style="left:85.4px;top:81.00px" width="7.2" height="7.2" viewBox="0 0 7.2 7.2"><circle cx="2.6" cy="2.6" r="2.2" fill="#f0f0f0"/><rect x="2.8" y="2.8" width="3.8" height="3.8" fill="#f0f0f0"/><path d="M2.8 2.8H4.8A2.2 2.2 0 0 1 2.8 4.8Z" fill="#7a1a9a"/></svg>
<span class="t" style="left:94.8px;transform-origin:0 50%;top:91.80px;font-size:5.0px;line-height:6.00px;color:#d6d6d6;font-weight:normal;transform:scaleX(0.93);">Division</span>
<span class="t" style="right:587.4px;transform-origin:100% 50%;top:91.80px;font-size:5.0px;line-height:6.00px;color:#8c8c8c;font-weight:normal;transform:scaleX(0.93);">Ctrl+/</span>
<svg style="left:85.4px;top:91.10px" width="7.2" height="7.2" viewBox="0 0 7.2 7.2"><circle cx="2.6" cy="2.6" r="2.2" fill="#a8187e"/><rect x="2.8" y="2.8" width="3.8" height="3.8" fill="#f0f0f0"/><path d="M2.8 2.8H4.8A2.2 2.2 0 0 1 2.8 4.8Z" fill="#d8d8d8"/></svg>
<span class="t" style="left:94.8px;transform-origin:0 50%;top:101.90px;font-size:5.0px;line-height:6.00px;color:#d6d6d6;font-weight:normal;transform:scaleX(0.93);">Cut Path</span>
<span class="t" style="right:587.4px;transform-origin:100% 50%;top:101.90px;font-size:5.0px;line-height:6.00px;color:#8c8c8c;font-weight:normal;transform:scaleX(0.93);">Ctrl+Alt+/</span>
<svg style="left:85.4px;top:101.20px" width="7.2" height="7.2" viewBox="0 0 7.2 7.2"><circle cx="2.6" cy="2.6" r="2" fill="none" stroke="#a8187e" stroke-width="0.7"/><rect x="2.8" y="2.8" width="3.6" height="3.6" fill="none" stroke="#e8e8e8" stroke-width="0.7"/></svg>
<span class="t" style="left:94.8px;transform-origin:0 50%;top:112.00px;font-size:5.0px;line-height:6.00px;color:#d6d6d6;font-weight:normal;transform:scaleX(0.93);">Combine</span>
<span class="t" style="right:587.4px;transform-origin:100% 50%;top:112.00px;font-size:5.0px;line-height:6.00px;color:#8c8c8c;font-weight:normal;transform:scaleX(0.93);">Ctrl+K</span>
<svg style="left:85.4px;top:111.30px" width="7.2" height="7.2" viewBox="0 0 7.2 7.2"><circle cx="2.6" cy="2.6" r="2" fill="none" stroke="#e8e8e8" stroke-width="0.7"/><rect x="2.8" y="2.8" width="3.6" height="3.6" fill="none" stroke="#e8e8e8" stroke-width="0.7"/></svg>
<span class="t" style="left:94.8px;transform-origin:0 50%;top:122.20px;font-size:5.0px;line-height:6.00px;color:#d6d6d6;font-weight:normal;transform:scaleX(0.93);">Break Apart</span>
<span class="t" style="right:587.4px;transform-origin:100% 50%;top:122.20px;font-size:5.0px;line-height:6.00px;color:#8c8c8c;font-weight:normal;transform:scaleX(0.93);">Shift+Ctrl+K</span>
<svg style="left:85.4px;top:121.50px" width="7.2" height="7.2" viewBox="0 0 7.2 7.2"><circle cx="2.6" cy="2.6" r="2" fill="none" stroke="#e8e8e8" stroke-width="0.7"/><rect x="3" y="3.2" width="3.6" height="3.4" fill="none" stroke="#e8e8e8" stroke-width="0.7"/></svg>
<span class="t" style="left:94.8px;transform-origin:0 50%;top:132.20px;font-size:5.0px;line-height:6.00px;color:#d6d6d6;font-weight:normal;transform:scaleX(0.93);">Split Path</span>
<span class="t" style="right:587.4px;transform-origin:100% 50%;top:132.20px;font-size:5.0px;line-height:6.00px;color:#8c8c8c;font-weight:normal;transform:scaleX(0.93);">Shift+Ctrl+Alt+K</span>
<svg style="left:85.4px;top:131.50px" width="7.2" height="7.2" viewBox="0 0 7.2 7.2"><circle cx="2.4" cy="2.4" r="1.8" fill="none" stroke="#e8e8e8" stroke-width="0.7"/><circle cx="4.8" cy="4.8" r="1.8" fill="none" stroke="#e8e8e8" stroke-width="0.7"/></svg>
<span class="t" style="left:94.8px;transform-origin:0 50%;top:142.30px;font-size:5.0px;line-height:6.00px;color:#d6d6d6;font-weight:normal;transform:scaleX(0.93);">Fracture</span>
<span class="t" style="right:587.4px;transform-origin:100% 50%;top:142.30px;font-size:5.0px;line-height:6.00px;color:#8c8c8c;font-weight:normal;transform:scaleX(0.93);">Shift+Alt+F</span>
<svg style="left:85.4px;top:141.60px" width="7.2" height="7.2" viewBox="0 0 7.2 7.2"><circle cx="2.4" cy="2.4" r="2" fill="#ff10a0"/><rect x="2.8" y="2.8" width="3.8" height="3.8" fill="#f0f0f0"/><path d="M2.8 2.8H4.6A2 2 0 0 1 2.8 4.6Z" fill="#555"/></svg>
<span class="t" style="left:94.8px;transform-origin:0 50%;top:152.40px;font-size:5.0px;line-height:6.00px;color:#d6d6d6;font-weight:normal;transform:scaleX(0.93);">Flatten</span>
<span class="t" style="right:587.4px;transform-origin:100% 50%;top:152.40px;font-size:5.0px;line-height:6.00px;color:#8c8c8c;font-weight:normal;transform:scaleX(0.93);">Shift+F</span>
<svg style="left:85.4px;top:151.70px" width="7.2" height="7.2" viewBox="0 0 7.2 7.2"><rect x="0.6" y="2.6" width="4" height="4" fill="#f0f0f0"/><circle cx="4.8" cy="2.4" r="2" fill="#f0f0f0" stroke="#2f2f2f" stroke-width="0.4"/></svg>
<span class="t" style="left:94.8px;transform-origin:0 50%;top:162.10px;font-size:5.0px;line-height:6.00px;color:#d6d6d6;font-weight:normal;transform:scaleX(0.93);">Inset</span>
<span class="t" style="right:587.4px;transform-origin:100% 50%;top:162.10px;font-size:5.0px;line-height:6.00px;color:#8c8c8c;font-weight:normal;transform:scaleX(0.93);">Ctrl+(</span>
<svg style="left:85.4px;top:161.40px" width="7.2" height="7.2" viewBox="0 0 7.2 7.2"><path d="M0.6 2.4A4.6 4.6 0 0 1 5.6 6.8" fill="none" stroke="#d8d8d8" stroke-width="0.8"/><path d="M1.4 4.2A2.6 2.6 0 0 1 3.6 6.6" fill="none" stroke="#27b33b" stroke-width="0.9"/></svg>
<span class="t" style="left:94.8px;transform-origin:0 50%;top:172.10px;font-size:5.0px;line-height:6.00px;color:#d6d6d6;font-weight:normal;transform:scaleX(0.93);">Outset</span>
<span class="t" style="right:587.4px;transform-origin:100% 50%;top:172.10px;font-size:5.0px;line-height:6.00px;color:#8c8c8c;font-weight:normal;transform:scaleX(0.93);">Ctrl+)</span>
<svg style="left:85.4px;top:171.40px" width="7.2" height="7.2" viewBox="0 0 7.2 7.2"><path d="M0.6 1A5.6 5.6 0 0 1 6.6 6.8" fill="none" stroke="#d8d8d8" stroke-width="0.8"/><path d="M1.2 3.6A3.2 3.2 0 0 1 4.2 6.6" fill="none" stroke="#27b33b" stroke-width="0.9"/></svg>
<span class="t" style="left:94.8px;transform-origin:0 50%;top:182.10px;font-size:5.0px;line-height:6.00px;color:#d6d6d6;font-weight:normal;transform:scaleX(0.93);">Dynamic Offset</span>
<span class="t" style="right:587.4px;transform-origin:100% 50%;top:182.10px;font-size:5.0px;line-height:6.00px;color:#8c8c8c;font-weight:normal;transform:scaleX(0.93);">Ctrl+J</span>
<svg style="left:85.4px;top:181.40px" width="7.2" height="7.2" viewBox="0 0 7.2 7.2"><path d="M0.6 1A5.6 5.6 0 0 1 6.6 6.8M0.8 3A3.8 3.8 0 0 1 4.8 6.8M1 5A2 2 0 0 1 3 6.8" fill="none" stroke="#d8d8d8" stroke-width="0.7"/></svg>
<span class="t" style="left:94.8px;transform-origin:0 50%;top:192.20px;font-size:5.0px;line-height:6.00px;color:#d6d6d6;font-weight:normal;transform:scaleX(0.93);">Linked Offset</span>
<span class="t" style="right:587.4px;transform-origin:100% 50%;top:192.20px;font-size:5.0px;line-height:6.00px;color:#8c8c8c;font-weight:normal;transform:scaleX(0.93);">Ctrl+Alt+J</span>
<svg style="left:85.4px;top:191.50px" width="7.2" height="7.2" viewBox="0 0 7.2 7.2"><rect x="0.6" y="0.6" width="4" height="3.6" fill="none" stroke="#e8e8e8" stroke-width="0.7"/><path d="M2.4 3A3.6 3.6 0 0 1 6.4 6.8M3 5A2 2 0 0 1 4.8 6.8" fill="none" stroke="#d8d8d8" stroke-width="0.7"/></svg>
<span class="t" style="left:94.8px;transform-origin:0 50%;top:202.80px;font-size:5.0px;line-height:6.00px;color:#d6d6d6;font-weight:normal;transform:scaleX(0.93);">Fill between paths</span>
<span class="t" style="left:94.8px;transform-origin:0 50%;top:213.10px;font-size:5.0px;line-height:6.00px;color:#d6d6d6;font-weight:normal;transform:scaleX(0.93);">Simplify</span>
<span class="t" style="right:587.4px;transform-origin:100% 50%;top:213.10px;font-size:5.0px;line-height:6.00px;color:#8c8c8c;font-weight:normal;transform:scaleX(0.93);">Ctrl+L</span>
<span class="t" style="left:94.8px;transform-origin:0 50%;top:223.20px;font-size:5.0px;line-height:6.00px;color:#d6d6d6;font-weight:normal;transform:scaleX(0.93);">Reverse</span>
<span class="t" style="left:94.8px;transform-origin:0 50%;top:233.70px;font-size:5.0px;line-height:6.00px;color:#d6d6d6;font-weight:normal;transform:scaleX(0.93);">Path Effects...</span>
<span class="t" style="right:587.4px;transform-origin:100% 50%;top:233.70px;font-size:5.0px;line-height:6.00px;color:#8c8c8c;font-weight:normal;transform:scaleX(0.93);">Ctrl+&amp;</span>
<span class="t" style="left:94.8px;transform-origin:0 50%;top:243.70px;font-size:5.0px;line-height:6.00px;color:#d6d6d6;font-weight:normal;transform:scaleX(0.93);">Paste Path Effect</span>
<span class="t" style="right:587.4px;transform-origin:100% 50%;top:243.70px;font-size:5.0px;line-height:6.00px;color:#8c8c8c;font-weight:normal;transform:scaleX(0.93);">&amp;</span>
<span class="t" style="left:94.8px;transform-origin:0 50%;top:253.70px;font-size:5.0px;line-height:6.00px;color:#d6d6d6;font-weight:normal;transform:scaleX(0.93);">Remove Path Effect</span>
<div class="r" style="left:78.9px;top:8.7px;width:20px;height:9.1px;border:2.2px solid #f0161e;"></div>
<div class="r" style="left:81.6px;top:48.6px;width:98.6px;height:70.6px;border:2.1px solid #f0161e;"></div>
<svg style="left:0;top:0" width="768" height="432" viewBox="0 0 768 432">
<g opacity="0.72">
<path d="M688.6 401.4H695.2V403.6H691V414H694.4V421L690.2 416.2H688.6Z" fill="#e0557a"/>
<path d="M698.2 401.4H704.6V416.2H698.2V414H702.2V403.6H698.2Z" fill="#4fb4ea"/>
<text x="708.5" y="415.5" font-family="Liberation Sans, sans-serif" font-size="20.6" font-weight="bold" fill="#d6d6d6" textLength="50.6" lengthAdjust="spacingAndGlyphs">XDA</text>
</g></svg>
</div></body></html>
